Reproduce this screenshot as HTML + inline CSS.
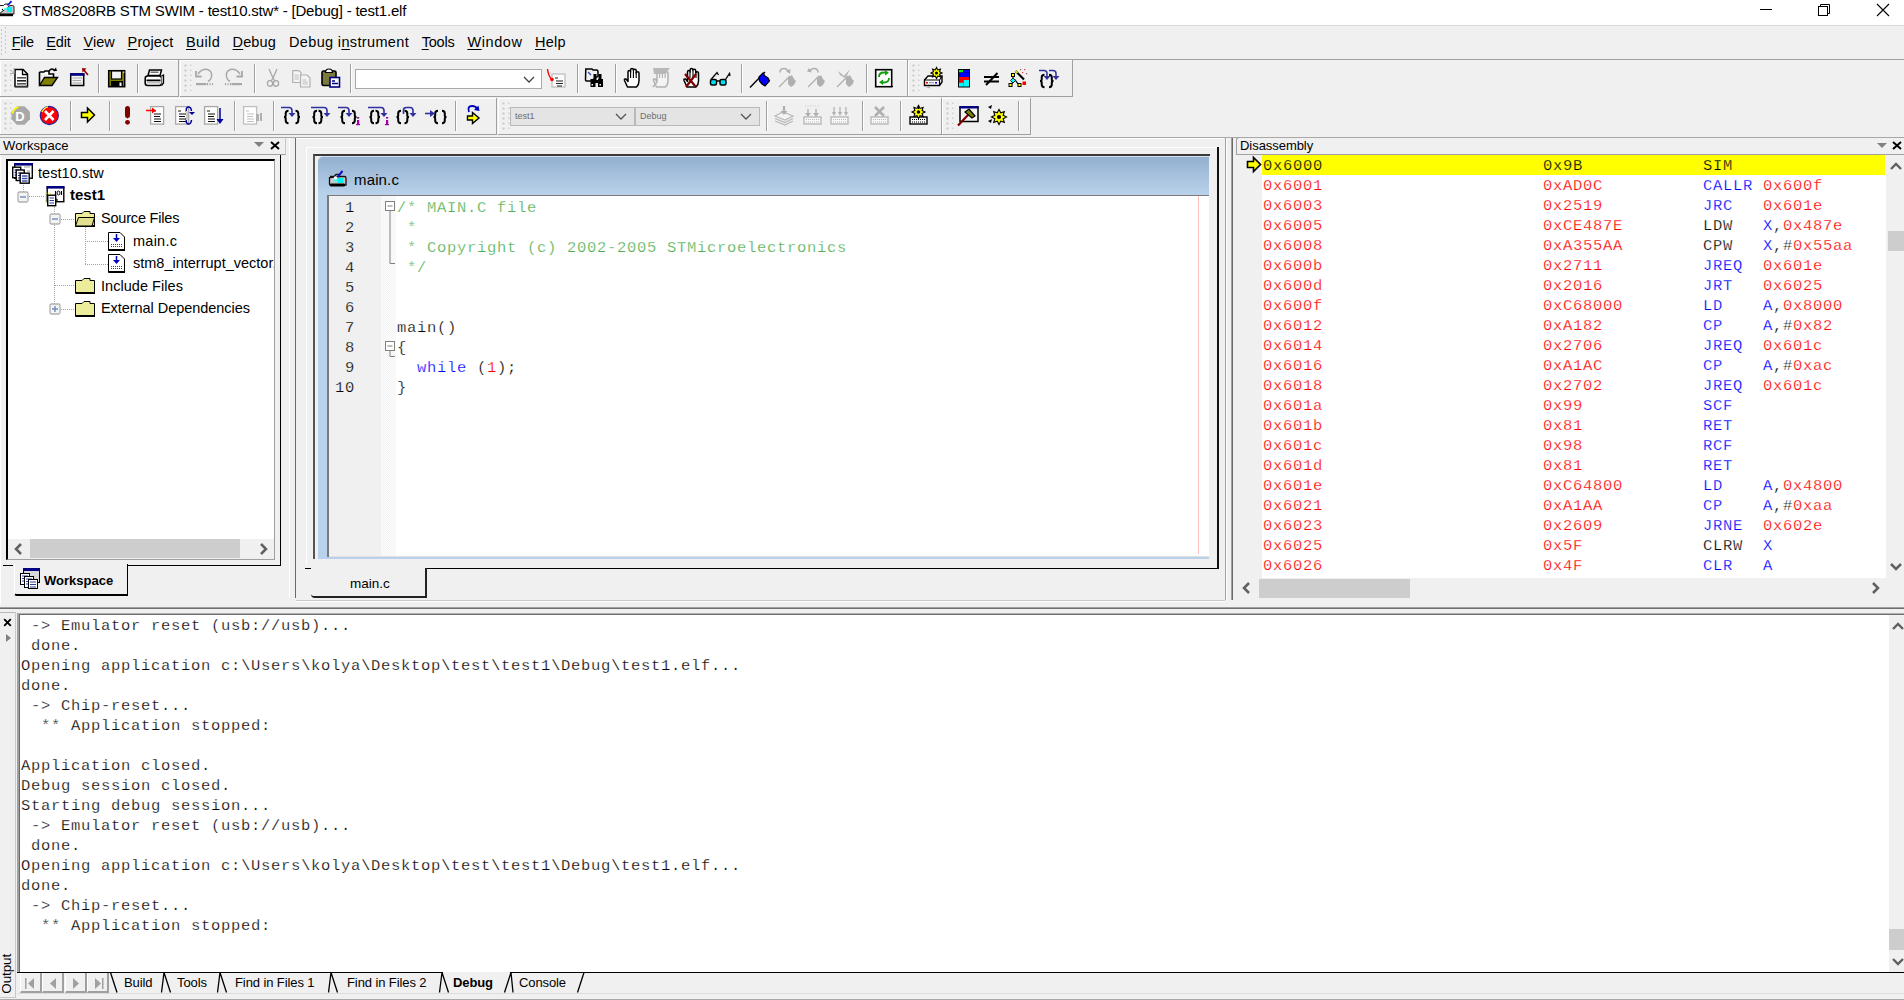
<!DOCTYPE html>
<html><head><meta charset="utf-8">
<style>
html,body{margin:0;padding:0;width:1904px;height:1000px;overflow:hidden;background:#f0f0f0;font-family:"Liberation Sans",sans-serif;}
.a{position:absolute;}
.t{position:absolute;white-space:pre;line-height:1;font-family:"Liberation Sans",sans-serif;color:#000;}
.m{font-family:"Liberation Mono",monospace;-webkit-text-stroke:0.25px #fff;}
u{text-decoration:underline;text-decoration-thickness:1px;text-underline-offset:1.5px;}
svg{position:absolute;overflow:visible;}
</style></head><body>
<div class="a" style="left:0px;top:0px;width:1904px;height:25px;background:#fff"></div>
<div class="a" style="left:0px;top:25px;width:1904px;height:1px;background:#dadada"></div>
<svg style="left:0px;top:0px" width="16" height="18" viewBox="0 0 16 18"><path d="M-1 5.5 H3.5 L5 4 H8 M10 5.5 H12.5 Q14 5.5 14 7 V14 H-1Z" fill="#c8c8c8" stroke="#222" stroke-width="1"/><rect x="-1" y="13.8" width="14" height="2.4" fill="#000"/><rect x="7" y="7" width="5" height="5" fill="#00f0f0"/><rect x="4" y="8" width="3" height="2" fill="#40f0f0"/><circle cx="5" cy="7" r="1.5" fill="#fff"/><path d="M7.5 5.5 L11.5 1.2" stroke="#1010c0" stroke-width="1.8"/><circle cx="2.5" cy="9.5" r="0.7" fill="#000"/></svg>
<div class="t" style="left:22px;top:3.30px;font-size:15px;letter-spacing:-0.2px">STM8S208RB STM SWIM - test10.stw* - [Debug] - test1.elf</div>
<div class="a" style="left:1760px;top:9px;width:12px;height:1px;background:#000"></div>
<svg style="left:1816px;top:3px" width="16" height="16" viewBox="0 0 16 16"><rect x="2.5" y="3.5" width="9" height="9" fill="none" stroke="#000"/><path d="M4.5 3.5 V1.5 H13.5 V10.5 H11.5" fill="none" stroke="#000"/></svg>
<svg style="left:1876px;top:3px" width="14" height="14" viewBox="0 0 14 14"><path d="M1 1 L13 13 M13 1 L1 13" stroke="#000" stroke-width="1.1"/></svg>
<div class="a" style="left:0px;top:26px;width:1904px;height:32px;background:#f0f0f0"></div>
<svg style="left:0px;top:28px" width="8" height="28" viewBox="0 0 8 28"><rect x="1" y="1" width="1" height="2" fill="#c8c8c8"/><rect x="5" y="-1" width="1" height="2" fill="#c8c8c8"/><rect x="1" y="5" width="1" height="2" fill="#c8c8c8"/><rect x="5" y="3" width="1" height="2" fill="#c8c8c8"/><rect x="1" y="9" width="1" height="2" fill="#c8c8c8"/><rect x="5" y="7" width="1" height="2" fill="#c8c8c8"/><rect x="1" y="13" width="1" height="2" fill="#c8c8c8"/><rect x="5" y="11" width="1" height="2" fill="#c8c8c8"/><rect x="1" y="17" width="1" height="2" fill="#c8c8c8"/><rect x="5" y="15" width="1" height="2" fill="#c8c8c8"/><rect x="1" y="21" width="1" height="2" fill="#c8c8c8"/><rect x="5" y="19" width="1" height="2" fill="#c8c8c8"/><rect x="1" y="25" width="1" height="2" fill="#c8c8c8"/><rect x="5" y="23" width="1" height="2" fill="#c8c8c8"/></svg>
<div class="t" style="left:11.7px;top:35.23px;font-size:14.5px;letter-spacing:-0.36px"><u>F</u>ile</div>
<div class="t" style="left:46.3px;top:35.23px;font-size:14.5px;letter-spacing:-0.13px"><u>E</u>dit</div>
<div class="t" style="left:83.5px;top:35.23px;font-size:14.5px;letter-spacing:0.04px"><u>V</u>iew</div>
<div class="t" style="left:127.6px;top:35.23px;font-size:14.5px;letter-spacing:0.1px"><u>P</u>roject</div>
<div class="t" style="left:186px;top:35.23px;font-size:14.5px;letter-spacing:0.36px"><u>B</u>uild</div>
<div class="t" style="left:232.6px;top:35.23px;font-size:14.5px;letter-spacing:0.11px"><u>D</u>ebug</div>
<div class="t" style="left:289px;top:35.23px;font-size:14.5px;letter-spacing:0.35px">Debug i<u>n</u>strument</div>
<div class="t" style="left:421.7px;top:35.23px;font-size:14.5px;letter-spacing:-0.19px"><u>T</u>ools</div>
<div class="t" style="left:467.4px;top:35.23px;font-size:14.5px;letter-spacing:0.6px"><u>W</u>indow</div>
<div class="t" style="left:535px;top:35.23px;font-size:14.5px;letter-spacing:0.28px"><u>H</u>elp</div>
<div class="a" style="left:0px;top:59px;width:1904px;height:1px;background:#a0a0a0"></div>
<div class="a" style="left:0px;top:60px;width:179px;height:1px;background:#ffffff"></div>
<div class="a" style="left:0px;top:60px;width:1px;height:37px;background:#ffffff"></div>
<div class="a" style="left:0px;top:96px;width:179px;height:1px;background:#a0a0a0"></div>
<div class="a" style="left:178px;top:60px;width:1px;height:37px;background:#a0a0a0"></div>
<svg style="left:4px;top:64px" width="10" height="31" viewBox="0 0 10 31"><rect x="0.5" y="0.5" width="2" height="2" fill="#c8c8c8"/><rect x="1.5" y="-1" width="1" height="1" fill="#fafafa"/><rect x="6" y="0.5" width="1.5" height="1.5" fill="#d0d0d0"/><rect x="7" y="-1" width="1" height="1" fill="#fafafa"/><rect x="0.5" y="5.5" width="2" height="2" fill="#c8c8c8"/><rect x="1.5" y="4" width="1" height="1" fill="#fafafa"/><rect x="6" y="5.5" width="1.5" height="1.5" fill="#d0d0d0"/><rect x="7" y="4" width="1" height="1" fill="#fafafa"/><rect x="0.5" y="10.5" width="2" height="2" fill="#c8c8c8"/><rect x="1.5" y="9" width="1" height="1" fill="#fafafa"/><rect x="6" y="10.5" width="1.5" height="1.5" fill="#d0d0d0"/><rect x="7" y="9" width="1" height="1" fill="#fafafa"/><rect x="0.5" y="15.5" width="2" height="2" fill="#c8c8c8"/><rect x="1.5" y="14" width="1" height="1" fill="#fafafa"/><rect x="6" y="15.5" width="1.5" height="1.5" fill="#d0d0d0"/><rect x="7" y="14" width="1" height="1" fill="#fafafa"/><rect x="0.5" y="20.5" width="2" height="2" fill="#c8c8c8"/><rect x="1.5" y="19" width="1" height="1" fill="#fafafa"/><rect x="6" y="20.5" width="1.5" height="1.5" fill="#d0d0d0"/><rect x="7" y="19" width="1" height="1" fill="#fafafa"/><rect x="0.5" y="25.5" width="2" height="2" fill="#c8c8c8"/><rect x="1.5" y="24" width="1" height="1" fill="#fafafa"/><rect x="6" y="25.5" width="1.5" height="1.5" fill="#d0d0d0"/><rect x="7" y="24" width="1" height="1" fill="#fafafa"/></svg>
<div class="a" style="left:180px;top:60px;width:728px;height:1px;background:#ffffff"></div>
<div class="a" style="left:180px;top:60px;width:1px;height:37px;background:#ffffff"></div>
<div class="a" style="left:180px;top:96px;width:728px;height:1px;background:#a0a0a0"></div>
<div class="a" style="left:907px;top:60px;width:1px;height:37px;background:#a0a0a0"></div>
<svg style="left:184px;top:64px" width="10" height="31" viewBox="0 0 10 31"><rect x="0.5" y="0.5" width="2" height="2" fill="#c8c8c8"/><rect x="1.5" y="-1" width="1" height="1" fill="#fafafa"/><rect x="6" y="0.5" width="1.5" height="1.5" fill="#d0d0d0"/><rect x="7" y="-1" width="1" height="1" fill="#fafafa"/><rect x="0.5" y="5.5" width="2" height="2" fill="#c8c8c8"/><rect x="1.5" y="4" width="1" height="1" fill="#fafafa"/><rect x="6" y="5.5" width="1.5" height="1.5" fill="#d0d0d0"/><rect x="7" y="4" width="1" height="1" fill="#fafafa"/><rect x="0.5" y="10.5" width="2" height="2" fill="#c8c8c8"/><rect x="1.5" y="9" width="1" height="1" fill="#fafafa"/><rect x="6" y="10.5" width="1.5" height="1.5" fill="#d0d0d0"/><rect x="7" y="9" width="1" height="1" fill="#fafafa"/><rect x="0.5" y="15.5" width="2" height="2" fill="#c8c8c8"/><rect x="1.5" y="14" width="1" height="1" fill="#fafafa"/><rect x="6" y="15.5" width="1.5" height="1.5" fill="#d0d0d0"/><rect x="7" y="14" width="1" height="1" fill="#fafafa"/><rect x="0.5" y="20.5" width="2" height="2" fill="#c8c8c8"/><rect x="1.5" y="19" width="1" height="1" fill="#fafafa"/><rect x="6" y="20.5" width="1.5" height="1.5" fill="#d0d0d0"/><rect x="7" y="19" width="1" height="1" fill="#fafafa"/><rect x="0.5" y="25.5" width="2" height="2" fill="#c8c8c8"/><rect x="1.5" y="24" width="1" height="1" fill="#fafafa"/><rect x="6" y="25.5" width="1.5" height="1.5" fill="#d0d0d0"/><rect x="7" y="24" width="1" height="1" fill="#fafafa"/></svg>
<div class="a" style="left:908px;top:60px;width:165px;height:1px;background:#ffffff"></div>
<div class="a" style="left:908px;top:60px;width:1px;height:37px;background:#ffffff"></div>
<div class="a" style="left:908px;top:96px;width:165px;height:1px;background:#a0a0a0"></div>
<div class="a" style="left:1072px;top:60px;width:1px;height:37px;background:#a0a0a0"></div>
<svg style="left:912px;top:64px" width="10" height="31" viewBox="0 0 10 31"><rect x="0.5" y="0.5" width="2" height="2" fill="#c8c8c8"/><rect x="1.5" y="-1" width="1" height="1" fill="#fafafa"/><rect x="6" y="0.5" width="1.5" height="1.5" fill="#d0d0d0"/><rect x="7" y="-1" width="1" height="1" fill="#fafafa"/><rect x="0.5" y="5.5" width="2" height="2" fill="#c8c8c8"/><rect x="1.5" y="4" width="1" height="1" fill="#fafafa"/><rect x="6" y="5.5" width="1.5" height="1.5" fill="#d0d0d0"/><rect x="7" y="4" width="1" height="1" fill="#fafafa"/><rect x="0.5" y="10.5" width="2" height="2" fill="#c8c8c8"/><rect x="1.5" y="9" width="1" height="1" fill="#fafafa"/><rect x="6" y="10.5" width="1.5" height="1.5" fill="#d0d0d0"/><rect x="7" y="9" width="1" height="1" fill="#fafafa"/><rect x="0.5" y="15.5" width="2" height="2" fill="#c8c8c8"/><rect x="1.5" y="14" width="1" height="1" fill="#fafafa"/><rect x="6" y="15.5" width="1.5" height="1.5" fill="#d0d0d0"/><rect x="7" y="14" width="1" height="1" fill="#fafafa"/><rect x="0.5" y="20.5" width="2" height="2" fill="#c8c8c8"/><rect x="1.5" y="19" width="1" height="1" fill="#fafafa"/><rect x="6" y="20.5" width="1.5" height="1.5" fill="#d0d0d0"/><rect x="7" y="19" width="1" height="1" fill="#fafafa"/><rect x="0.5" y="25.5" width="2" height="2" fill="#c8c8c8"/><rect x="1.5" y="24" width="1" height="1" fill="#fafafa"/><rect x="6" y="25.5" width="1.5" height="1.5" fill="#d0d0d0"/><rect x="7" y="24" width="1" height="1" fill="#fafafa"/></svg>
<div class="a" style="left:0px;top:98px;width:497px;height:1px;background:#ffffff"></div>
<div class="a" style="left:0px;top:98px;width:1px;height:37px;background:#ffffff"></div>
<div class="a" style="left:0px;top:134px;width:497px;height:1px;background:#a0a0a0"></div>
<div class="a" style="left:496px;top:98px;width:1px;height:37px;background:#a0a0a0"></div>
<svg style="left:4px;top:102px" width="10" height="31" viewBox="0 0 10 31"><rect x="0.5" y="0.5" width="2" height="2" fill="#c8c8c8"/><rect x="1.5" y="-1" width="1" height="1" fill="#fafafa"/><rect x="6" y="0.5" width="1.5" height="1.5" fill="#d0d0d0"/><rect x="7" y="-1" width="1" height="1" fill="#fafafa"/><rect x="0.5" y="5.5" width="2" height="2" fill="#c8c8c8"/><rect x="1.5" y="4" width="1" height="1" fill="#fafafa"/><rect x="6" y="5.5" width="1.5" height="1.5" fill="#d0d0d0"/><rect x="7" y="4" width="1" height="1" fill="#fafafa"/><rect x="0.5" y="10.5" width="2" height="2" fill="#c8c8c8"/><rect x="1.5" y="9" width="1" height="1" fill="#fafafa"/><rect x="6" y="10.5" width="1.5" height="1.5" fill="#d0d0d0"/><rect x="7" y="9" width="1" height="1" fill="#fafafa"/><rect x="0.5" y="15.5" width="2" height="2" fill="#c8c8c8"/><rect x="1.5" y="14" width="1" height="1" fill="#fafafa"/><rect x="6" y="15.5" width="1.5" height="1.5" fill="#d0d0d0"/><rect x="7" y="14" width="1" height="1" fill="#fafafa"/><rect x="0.5" y="20.5" width="2" height="2" fill="#c8c8c8"/><rect x="1.5" y="19" width="1" height="1" fill="#fafafa"/><rect x="6" y="20.5" width="1.5" height="1.5" fill="#d0d0d0"/><rect x="7" y="19" width="1" height="1" fill="#fafafa"/><rect x="0.5" y="25.5" width="2" height="2" fill="#c8c8c8"/><rect x="1.5" y="24" width="1" height="1" fill="#fafafa"/><rect x="6" y="25.5" width="1.5" height="1.5" fill="#d0d0d0"/><rect x="7" y="24" width="1" height="1" fill="#fafafa"/></svg>
<div class="a" style="left:498px;top:98px;width:444px;height:1px;background:#ffffff"></div>
<div class="a" style="left:498px;top:98px;width:1px;height:37px;background:#ffffff"></div>
<div class="a" style="left:498px;top:134px;width:444px;height:1px;background:#a0a0a0"></div>
<div class="a" style="left:941px;top:98px;width:1px;height:37px;background:#a0a0a0"></div>
<svg style="left:502px;top:102px" width="10" height="31" viewBox="0 0 10 31"><rect x="0.5" y="0.5" width="2" height="2" fill="#c8c8c8"/><rect x="1.5" y="-1" width="1" height="1" fill="#fafafa"/><rect x="6" y="0.5" width="1.5" height="1.5" fill="#d0d0d0"/><rect x="7" y="-1" width="1" height="1" fill="#fafafa"/><rect x="0.5" y="5.5" width="2" height="2" fill="#c8c8c8"/><rect x="1.5" y="4" width="1" height="1" fill="#fafafa"/><rect x="6" y="5.5" width="1.5" height="1.5" fill="#d0d0d0"/><rect x="7" y="4" width="1" height="1" fill="#fafafa"/><rect x="0.5" y="10.5" width="2" height="2" fill="#c8c8c8"/><rect x="1.5" y="9" width="1" height="1" fill="#fafafa"/><rect x="6" y="10.5" width="1.5" height="1.5" fill="#d0d0d0"/><rect x="7" y="9" width="1" height="1" fill="#fafafa"/><rect x="0.5" y="15.5" width="2" height="2" fill="#c8c8c8"/><rect x="1.5" y="14" width="1" height="1" fill="#fafafa"/><rect x="6" y="15.5" width="1.5" height="1.5" fill="#d0d0d0"/><rect x="7" y="14" width="1" height="1" fill="#fafafa"/><rect x="0.5" y="20.5" width="2" height="2" fill="#c8c8c8"/><rect x="1.5" y="19" width="1" height="1" fill="#fafafa"/><rect x="6" y="20.5" width="1.5" height="1.5" fill="#d0d0d0"/><rect x="7" y="19" width="1" height="1" fill="#fafafa"/><rect x="0.5" y="25.5" width="2" height="2" fill="#c8c8c8"/><rect x="1.5" y="24" width="1" height="1" fill="#fafafa"/><rect x="6" y="25.5" width="1.5" height="1.5" fill="#d0d0d0"/><rect x="7" y="24" width="1" height="1" fill="#fafafa"/></svg>
<div class="a" style="left:942px;top:98px;width:89px;height:1px;background:#ffffff"></div>
<div class="a" style="left:942px;top:98px;width:1px;height:37px;background:#ffffff"></div>
<div class="a" style="left:942px;top:134px;width:89px;height:1px;background:#a0a0a0"></div>
<div class="a" style="left:1030px;top:98px;width:1px;height:37px;background:#a0a0a0"></div>
<svg style="left:946px;top:102px" width="10" height="31" viewBox="0 0 10 31"><rect x="0.5" y="0.5" width="2" height="2" fill="#c8c8c8"/><rect x="1.5" y="-1" width="1" height="1" fill="#fafafa"/><rect x="6" y="0.5" width="1.5" height="1.5" fill="#d0d0d0"/><rect x="7" y="-1" width="1" height="1" fill="#fafafa"/><rect x="0.5" y="5.5" width="2" height="2" fill="#c8c8c8"/><rect x="1.5" y="4" width="1" height="1" fill="#fafafa"/><rect x="6" y="5.5" width="1.5" height="1.5" fill="#d0d0d0"/><rect x="7" y="4" width="1" height="1" fill="#fafafa"/><rect x="0.5" y="10.5" width="2" height="2" fill="#c8c8c8"/><rect x="1.5" y="9" width="1" height="1" fill="#fafafa"/><rect x="6" y="10.5" width="1.5" height="1.5" fill="#d0d0d0"/><rect x="7" y="9" width="1" height="1" fill="#fafafa"/><rect x="0.5" y="15.5" width="2" height="2" fill="#c8c8c8"/><rect x="1.5" y="14" width="1" height="1" fill="#fafafa"/><rect x="6" y="15.5" width="1.5" height="1.5" fill="#d0d0d0"/><rect x="7" y="14" width="1" height="1" fill="#fafafa"/><rect x="0.5" y="20.5" width="2" height="2" fill="#c8c8c8"/><rect x="1.5" y="19" width="1" height="1" fill="#fafafa"/><rect x="6" y="20.5" width="1.5" height="1.5" fill="#d0d0d0"/><rect x="7" y="19" width="1" height="1" fill="#fafafa"/><rect x="0.5" y="25.5" width="2" height="2" fill="#c8c8c8"/><rect x="1.5" y="24" width="1" height="1" fill="#fafafa"/><rect x="6" y="25.5" width="1.5" height="1.5" fill="#d0d0d0"/><rect x="7" y="24" width="1" height="1" fill="#fafafa"/></svg>
<div class="a" style="left:98px;top:64px;width:1px;height:29px;background:#a0a0a0"></div>
<div class="a" style="left:99px;top:64px;width:1px;height:29px;background:#ffffff"></div>
<div class="a" style="left:137px;top:64px;width:1px;height:29px;background:#a0a0a0"></div>
<div class="a" style="left:138px;top:64px;width:1px;height:29px;background:#ffffff"></div>
<div class="a" style="left:254px;top:64px;width:1px;height:29px;background:#a0a0a0"></div>
<div class="a" style="left:255px;top:64px;width:1px;height:29px;background:#ffffff"></div>
<div class="a" style="left:350px;top:64px;width:1px;height:29px;background:#a0a0a0"></div>
<div class="a" style="left:351px;top:64px;width:1px;height:29px;background:#ffffff"></div>
<div class="a" style="left:577px;top:64px;width:1px;height:29px;background:#a0a0a0"></div>
<div class="a" style="left:578px;top:64px;width:1px;height:29px;background:#ffffff"></div>
<div class="a" style="left:615px;top:64px;width:1px;height:29px;background:#a0a0a0"></div>
<div class="a" style="left:616px;top:64px;width:1px;height:29px;background:#ffffff"></div>
<div class="a" style="left:741px;top:64px;width:1px;height:29px;background:#a0a0a0"></div>
<div class="a" style="left:742px;top:64px;width:1px;height:29px;background:#ffffff"></div>
<div class="a" style="left:866px;top:64px;width:1px;height:29px;background:#a0a0a0"></div>
<div class="a" style="left:867px;top:64px;width:1px;height:29px;background:#ffffff"></div>
<div class="a" style="left:70px;top:101px;width:1px;height:30px;background:#a0a0a0"></div>
<div class="a" style="left:71px;top:101px;width:1px;height:30px;background:#ffffff"></div>
<div class="a" style="left:109px;top:101px;width:1px;height:30px;background:#a0a0a0"></div>
<div class="a" style="left:110px;top:101px;width:1px;height:30px;background:#ffffff"></div>
<div class="a" style="left:234px;top:101px;width:1px;height:30px;background:#a0a0a0"></div>
<div class="a" style="left:235px;top:101px;width:1px;height:30px;background:#ffffff"></div>
<div class="a" style="left:273px;top:101px;width:1px;height:30px;background:#a0a0a0"></div>
<div class="a" style="left:274px;top:101px;width:1px;height:30px;background:#ffffff"></div>
<div class="a" style="left:455px;top:101px;width:1px;height:30px;background:#a0a0a0"></div>
<div class="a" style="left:456px;top:101px;width:1px;height:30px;background:#ffffff"></div>
<div class="a" style="left:766px;top:101px;width:1px;height:30px;background:#a0a0a0"></div>
<div class="a" style="left:767px;top:101px;width:1px;height:30px;background:#ffffff"></div>
<div class="a" style="left:862px;top:101px;width:1px;height:30px;background:#a0a0a0"></div>
<div class="a" style="left:863px;top:101px;width:1px;height:30px;background:#ffffff"></div>
<div class="a" style="left:900px;top:101px;width:1px;height:30px;background:#a0a0a0"></div>
<div class="a" style="left:901px;top:101px;width:1px;height:30px;background:#ffffff"></div>
<div class="a" style="left:1018px;top:101px;width:1px;height:30px;background:#a0a0a0"></div>
<div class="a" style="left:1019px;top:101px;width:1px;height:30px;background:#ffffff"></div>
<div class="a" style="left:355px;top:69px;width:187px;height:20px;background:#fff;border:1px solid #a9a9a9;box-sizing:border-box"></div>
<svg style="left:522px;top:74px" width="14" height="10" viewBox="0 0 14 10"><path d="M2 3 L7 8 L12 3" fill="none" stroke="#444" stroke-width="1.3"/></svg>
<div class="a" style="left:510px;top:107px;width:125px;height:19px;background:#e4e4e4;border:1px solid #b9b9b9;box-sizing:border-box"></div>
<div class="a" style="left:635px;top:107px;width:125px;height:19px;background:#e4e4e4;border:1px solid #b9b9b9;box-sizing:border-box"></div>
<div class="t" style="left:515px;top:112.38px;font-size:9px;color:#6d6d6d">test1</div>
<div class="t" style="left:640px;top:112.38px;font-size:9px;color:#6d6d6d">Debug</div>
<svg style="left:614px;top:111px" width="14" height="10" viewBox="0 0 14 10"><path d="M2 3 L7 8 L12 3" fill="none" stroke="#555" stroke-width="1.3"/></svg>
<svg style="left:739px;top:111px" width="14" height="10" viewBox="0 0 14 10"><path d="M2 3 L7 8 L12 3" fill="none" stroke="#555" stroke-width="1.3"/></svg>
<div class="a" style="left:0px;top:137px;width:286px;height:18px;background:#f0f0f0;border-top:1px solid #fff;border-right:1px solid #c8c8c8;border-bottom:1px solid #a0a0a0;box-sizing:border-box"></div>
<div class="t" style="left:3px;top:139.00px;font-size:13px;letter-spacing:0.1px">Workspace</div>
<svg style="left:254px;top:142px" width="10" height="6" viewBox="0 0 10 6"><path d="M0 0 L10 0 L5 5Z" fill="#808080"/></svg>
<svg style="left:270px;top:141px" width="10" height="9" viewBox="0 0 10 9"><path d="M1 1 L9 8 M9 1 L1 8" stroke="#000" stroke-width="2"/></svg>
<div class="a" style="left:280px;top:155px;width:1px;height:411px;background:#000"></div>
<div class="a" style="left:128px;top:565px;width:153px;height:1px;background:#000"></div>
<div class="a" style="left:0px;top:155px;width:1px;height:450px;background:#ffffff"></div>
<div class="a" style="left:6px;top:159px;width:269px;height:401px;background:#fff;border-left:2px solid #000;border-top:2px solid #000;border-right:1px solid #a0a0a0;border-bottom:1px solid #a0a0a0;box-sizing:border-box"></div>
<div class="a" style="left:8px;top:539px;width:266px;height:20px;background:#f0f0f0"></div>
<div class="a" style="left:30px;top:539px;width:210px;height:19px;background:#cdcdcd"></div>
<svg style="left:14px;top:543px" width="10" height="12" viewBox="0 0 10 12"><path d="M7 1 L2 6 L7 11" fill="none" stroke="#606060" stroke-width="2.5"/></svg>
<svg style="left:258px;top:543px" width="10" height="12" viewBox="0 0 10 12"><path d="M3 1 L8 6 L3 11" fill="none" stroke="#606060" stroke-width="2.5"/></svg>
<div class="a" style="left:3px;top:565px;width:10px;height:1px;background:#000"></div>
<div class="a" style="left:14px;top:564px;width:114px;height:32px;background:#f0f0f0;border-right:1px solid #000;border-bottom:2px solid #000;border-left:1px solid #fff;border-bottom-left-radius:3px;box-sizing:border-box"></div>
<div class="t" style="left:44px;top:574.00px;font-size:13px;font-weight:bold;letter-spacing:0px">Workspace</div>
<svg style="left:23px;top:183px" width="1" height="13" viewBox="0 0 1 13"><line x1="0.5" y1="0" x2="0.5" y2="13" stroke="#a0a0a0" stroke-dasharray="1 1"/></svg>
<svg style="left:29px;top:196px" width="15" height="1" viewBox="0 0 15 1"><line x1="0" y1="0.5" x2="15" y2="0.5" stroke="#a0a0a0" stroke-dasharray="1 1"/></svg>
<svg style="left:54px;top:205px" width="1" height="104" viewBox="0 0 1 104"><line x1="0.5" y1="0" x2="0.5" y2="104" stroke="#a0a0a0" stroke-dasharray="1 1"/></svg>
<svg style="left:61px;top:219px" width="14" height="1" viewBox="0 0 14 1"><line x1="0" y1="0.5" x2="14" y2="0.5" stroke="#a0a0a0" stroke-dasharray="1 1"/></svg>
<svg style="left:55px;top:285px" width="20" height="1" viewBox="0 0 20 1"><line x1="0" y1="0.5" x2="20" y2="0.5" stroke="#a0a0a0" stroke-dasharray="1 1"/></svg>
<svg style="left:61px;top:309px" width="14" height="1" viewBox="0 0 14 1"><line x1="0" y1="0.5" x2="14" y2="0.5" stroke="#a0a0a0" stroke-dasharray="1 1"/></svg>
<svg style="left:85px;top:227px" width="1" height="37" viewBox="0 0 1 37"><line x1="0.5" y1="0" x2="0.5" y2="37" stroke="#a0a0a0" stroke-dasharray="1 1"/></svg>
<svg style="left:85px;top:241px" width="23" height="1" viewBox="0 0 23 1"><line x1="0" y1="0.5" x2="23" y2="0.5" stroke="#a0a0a0" stroke-dasharray="1 1"/></svg>
<svg style="left:85px;top:264px" width="23" height="1" viewBox="0 0 23 1"><line x1="0" y1="0.5" x2="23" y2="0.5" stroke="#a0a0a0" stroke-dasharray="1 1"/></svg>
<svg style="left:17px;top:191px" width="12" height="12" viewBox="0 0 12 12"><rect x="1" y="1" width="10" height="10" rx="1.5" fill="#f4f4f4" stroke="#b0b0b0" stroke-width="1.3"/><path d="M3 6 H9" stroke="#7088c0" stroke-width="1.4"/></svg>
<svg style="left:49px;top:213px" width="12" height="12" viewBox="0 0 12 12"><rect x="1" y="1" width="10" height="10" rx="1.5" fill="#f4f4f4" stroke="#b0b0b0" stroke-width="1.3"/><path d="M3 6 H9" stroke="#7088c0" stroke-width="1.4"/></svg>
<svg style="left:49px;top:303px" width="12" height="12" viewBox="0 0 12 12"><rect x="1" y="1" width="10" height="10" rx="1.5" fill="#f4f4f4" stroke="#b0b0b0" stroke-width="1.3"/><path d="M3 6 H9" stroke="#7088c0" stroke-width="1.4"/><path d="M6 3 V9" stroke="#7088c0" stroke-width="1.4"/></svg>
<svg style="left:12px;top:163px" width="21" height="20" viewBox="0 0 21 20"><rect x="2.7" y="1.2" width="17.6" height="14" fill="#fff" stroke="#000" stroke-width="1.4"/><rect x="2" y="0" width="19" height="2.6" fill="#000080"/><path d="M12 4 H18 M15 8 H18" stroke="#999" stroke-width="1"/><rect x="0.7" y="4.2" width="8" height="10.5" fill="#fff" stroke="#000" stroke-width="1.4"/><path d="M2.5 7 H7 M2.5 9.5 H7 M2.5 12 H7" stroke="#2020a0" stroke-width="1.1"/><rect x="4.2" y="7" width="8" height="10.5" fill="#fff" stroke="#000" stroke-width="1.4"/><path d="M6 10 H10.5 M6 12.5 H10.5 M6 15 H10.5" stroke="#2020a0" stroke-width="1.1"/><rect x="8.2" y="10.2" width="9" height="10" fill="#fff" stroke="#000" stroke-width="1.4"/><path d="M10 13 H15.5 M10 15.5 H15.5 M10 18 H15.5" stroke="#4050b0" stroke-width="1.3"/></svg>
<div class="t" style="left:38px;top:165.73px;font-size:14.5px;letter-spacing:0.05px">test10.stw</div>
<svg style="left:45px;top:186px" width="20" height="21" viewBox="0 0 20 21"><rect x="2.2" y="1.2" width="16.6" height="14.5" fill="#fff" stroke="#000" stroke-width="1.4"/><rect x="1.5" y="0" width="18" height="2.6" fill="#000080"/><path d="M10.5 5 V9 M16.5 5 V9 M12 13 V16" stroke="#000" stroke-width="1.1"/><ellipse cx="13.5" cy="7" rx="1.5" ry="2" fill="none" stroke="#000" stroke-width="1"/><ellipse cx="9.5" cy="13.5" rx="1.5" ry="2" fill="none" stroke="#000" stroke-width="1"/><rect x="0.6" y="7.2" width="5" height="9" fill="none" stroke="#e8e800" stroke-width="1" stroke-dasharray="1 1"/><rect x="2.7" y="9.2" width="8" height="10.5" fill="#fff" stroke="#000" stroke-width="1.4"/><path d="M4.5 12 H9 M4.5 14.5 H9 M4.5 17 H9" stroke="#3040b0" stroke-width="1.2"/></svg>
<div class="t" style="left:70px;top:187.30px;font-size:15px;font-weight:bold;letter-spacing:0px">test1</div>
<svg style="left:75px;top:210px" width="20" height="18" viewBox="0 0 20 18"><path d="M0.5 3.5 H7 L9 1.5 H15 V3.5 H19.5 V16.5 H0.5Z" fill="#ecec9a" stroke="#000"/><rect x="1" y="15" width="19" height="2" fill="#000"/><path d="M3.5 7.5 H19.5 L17 16 H0.5Z" fill="#e0e090" stroke="#000"/></svg>
<div class="t" style="left:101px;top:210.73px;font-size:14.5px;letter-spacing:-0.2px">Source Files</div>
<svg style="left:108px;top:232px" width="18" height="19" viewBox="0 0 18 19"><path d="M0.5 0.5 H12 L16.5 5 V18.5 H0.5Z" fill="#fff" stroke="#000"/><rect x="1" y="17" width="16" height="2" fill="#000"/><path d="M8.5 2 V8" stroke="#0000c0" stroke-width="1.5"/><path d="M5 6 L8.5 10 L12 6Z" fill="#0000c0"/><path d="M3 12.5H14M3 14.5H14" stroke="#444" stroke-dasharray="1 1"/></svg>
<div class="t" style="left:133px;top:233.73px;font-size:14.5px;letter-spacing:0.25px">main.c</div>
<svg style="left:108px;top:254px" width="18" height="19" viewBox="0 0 18 19"><path d="M0.5 0.5 H12 L16.5 5 V18.5 H0.5Z" fill="#fff" stroke="#000"/><rect x="1" y="17" width="16" height="2" fill="#000"/><path d="M8.5 2 V8" stroke="#0000c0" stroke-width="1.5"/><path d="M5 6 L8.5 10 L12 6Z" fill="#0000c0"/><path d="M3 12.5H14M3 14.5H14" stroke="#444" stroke-dasharray="1 1"/></svg>
<div class="a" style="left:130px;top:250px;width:144px;height:24px;overflow:hidden">
<div class="t" style="left:3px;top:5.73px;font-size:14.5px;letter-spacing:0px">stm8_interrupt_vector.c</div>
</div>
<svg style="left:75px;top:277px" width="20" height="18" viewBox="0 0 20 18"><path d="M0.5 3.5 H7 L9 1.5 H15 V3.5 H19.5 V16.5 H0.5Z" fill="#ecec9a" stroke="#000"/><rect x="1" y="15" width="19" height="2" fill="#000"/></svg>
<div class="t" style="left:101px;top:278.73px;font-size:14.5px;letter-spacing:0.04px">Include Files</div>
<svg style="left:75px;top:300px" width="20" height="18" viewBox="0 0 20 18"><path d="M0.5 3.5 H7 L9 1.5 H15 V3.5 H19.5 V16.5 H0.5Z" fill="#ecec9a" stroke="#000"/><rect x="1" y="15" width="19" height="2" fill="#000"/></svg>
<div class="t" style="left:101px;top:300.73px;font-size:14.5px;letter-spacing:-0.05px">External Dependencies</div>
<div class="a" style="left:289px;top:137px;width:1px;height:460px;background:#ffffff"></div>
<div class="a" style="left:295px;top:137px;width:1px;height:461px;background:#696969"></div>
<div class="a" style="left:296px;top:600px;width:929px;height:1px;background:#c8c8c8"></div>
<div class="a" style="left:296px;top:601px;width:929px;height:1px;background:#ffffff"></div>
<div class="a" style="left:1225px;top:137px;width:1px;height:463px;background:#a0a0a0"></div>
<div class="a" style="left:1226px;top:137px;width:1px;height:463px;background:#ffffff"></div>
<div class="a" style="left:1232px;top:137px;width:1px;height:463px;background:#696969"></div>
<div class="a" style="left:1231px;top:137px;width:1px;height:463px;background:#a0a0a0"></div>
<div class="a" style="left:0px;top:607px;width:1904px;height:1px;background:#a0a0a0"></div>
<div class="a" style="left:0px;top:608px;width:1904px;height:1px;background:#6e6e6e"></div>
<div class="a" style="left:296px;top:137px;width:929px;height:463px;background:#f0f0f0"></div>
<div class="a" style="left:296px;top:138px;width:928px;height:1px;background:#ffffff"></div>
<div class="a" style="left:306px;top:147px;width:915px;height:418px;border-left:1px solid #fff;border-top:1px solid #fff;box-sizing:border-box"></div>
<div class="a" style="left:313px;top:154px;width:897px;height:415px;background:#f0f0f0;border-left:2px solid #555;border-top:2px solid #3a3a3a;box-sizing:border-box"></div>
<div class="a" style="left:1217px;top:147px;width:2px;height:422px;background:#111"></div>
<div class="a" style="left:318px;top:156px;width:891px;height:403px;background:#b9d1ea;border-top-left-radius:6px"></div>
<div class="a" style="left:322px;top:156px;width:887px;height:1px;background:#d4e0ee"></div>
<div class="a" style="left:318px;top:157px;width:891px;height:38px;background:linear-gradient(#93b0d0,#bad2eb);border-top-left-radius:5px"></div>
<div class="a" style="left:327px;top:195px;width:882px;height:1px;background:#7a7a7a"></div>
<svg style="left:329px;top:169px" width="20" height="18" viewBox="0 0 20 18"><path d="M1 7.5 H5 L7 5.5 H10 M12 7.5 H15.5 Q17 7.5 17 9 V16 H1 Q0.5 16 0.5 15 V8.5Z" fill="#c8c8c8" stroke="#111" stroke-width="1.3"/><rect x="1" y="14.5" width="15" height="3" rx="1" fill="#000"/><rect x="8.5" y="9" width="6" height="5" fill="#00f0f0"/><rect x="5" y="10" width="3" height="2.5" fill="#40f0f0"/><circle cx="6.5" cy="9" r="1.8" fill="#fff"/><path d="M9 7.5 L13.5 2" stroke="#1010c0" stroke-width="2"/></svg>
<div class="t" style="left:354px;top:172.30px;font-size:15px;letter-spacing:0.15px">main.c</div>
<div class="a" style="left:327px;top:196px;width:882px;height:362px;background:#fff;border-left:2px solid #7a7a7a;box-sizing:border-box"></div>
<div class="a" style="left:329px;top:196px;width:52px;height:360px;background:#f0f0f0"></div>
<div class="a" style="left:381px;top:196px;width:15px;height:360px;background-image:repeating-conic-gradient(#f4f4f4 0 25%,#fcfcfc 0 50%);background-size:2px 2px"></div>
<div class="a" style="left:329px;top:556px;width:880px;height:1px;background:#e0e0e0"></div>
<div class="a" style="left:327px;top:557px;width:882px;height:2px;background:#b9d1ea"></div>
<div class="a" style="left:1198px;top:196px;width:1px;height:358px;background:#ffc0c0"></div>
<div class="t m" style="left:345px;top:201.12px;font-size:15.5px;letter-spacing:0.70px;color:#000;-webkit-text-stroke-color:#f0f0f0">1</div>
<div class="t m" style="left:345px;top:221.12px;font-size:15.5px;letter-spacing:0.70px;color:#000;-webkit-text-stroke-color:#f0f0f0">2</div>
<div class="t m" style="left:345px;top:241.12px;font-size:15.5px;letter-spacing:0.70px;color:#000;-webkit-text-stroke-color:#f0f0f0">3</div>
<div class="t m" style="left:345px;top:261.12px;font-size:15.5px;letter-spacing:0.70px;color:#000;-webkit-text-stroke-color:#f0f0f0">4</div>
<div class="t m" style="left:345px;top:281.12px;font-size:15.5px;letter-spacing:0.70px;color:#000;-webkit-text-stroke-color:#f0f0f0">5</div>
<div class="t m" style="left:345px;top:301.12px;font-size:15.5px;letter-spacing:0.70px;color:#000;-webkit-text-stroke-color:#f0f0f0">6</div>
<div class="t m" style="left:345px;top:321.12px;font-size:15.5px;letter-spacing:0.70px;color:#000;-webkit-text-stroke-color:#f0f0f0">7</div>
<div class="t m" style="left:345px;top:341.12px;font-size:15.5px;letter-spacing:0.70px;color:#000;-webkit-text-stroke-color:#f0f0f0">8</div>
<div class="t m" style="left:345px;top:361.12px;font-size:15.5px;letter-spacing:0.70px;color:#000;-webkit-text-stroke-color:#f0f0f0">9</div>
<div class="t m" style="left:335px;top:381.12px;font-size:15.5px;letter-spacing:0.70px;color:#000;-webkit-text-stroke-color:#f0f0f0">10</div>
<svg style="left:384px;top:200px" width="12" height="70" viewBox="0 0 12 70"><rect x="1.5" y="1.5" width="9" height="9" fill="#fff" stroke="#808080"/><path d="M3.5 6 H8.5" stroke="#808080"/><path d="M6 11 V63.5 H11" fill="none" stroke="#808080"/></svg>
<svg style="left:384px;top:340px" width="12" height="20" viewBox="0 0 12 20"><rect x="1.5" y="1.5" width="9" height="9" fill="#fff" stroke="#808080"/><path d="M3.5 6 H8.5" stroke="#808080"/><path d="M6 11 V16.5 H11" fill="none" stroke="#808080"/></svg>
<div class="t m" style="left:397px;top:201.12px;font-size:15.5px;letter-spacing:0.70px;color:#000;"><span style="color:#4fae4f">/* MAIN.C file</span></div>
<div class="t m" style="left:397px;top:221.12px;font-size:15.5px;letter-spacing:0.70px;color:#000;"><span style="color:#4fae4f"> *</span></div>
<div class="t m" style="left:397px;top:241.12px;font-size:15.5px;letter-spacing:0.70px;color:#000;"><span style="color:#4fae4f"> * Copyright (c) 2002-2005 STMicroelectronics</span></div>
<div class="t m" style="left:397px;top:261.12px;font-size:15.5px;letter-spacing:0.70px;color:#000;"><span style="color:#4fae4f"> */</span></div>
<div class="t m" style="left:397px;top:321.12px;font-size:15.5px;letter-spacing:0.70px;color:#000;"><span style="color:#000">main()</span></div>
<div class="t m" style="left:397px;top:341.12px;font-size:15.5px;letter-spacing:0.70px;color:#000;"><span style="color:#000">{</span></div>
<div class="t m" style="left:397px;top:361.12px;font-size:15.5px;letter-spacing:0.70px;color:#000;"><span style="color:#000">  </span><span style="color:#0000ff">while</span><span style="color:#000"> (</span><span style="color:#ff0000">1</span><span style="color:#000">);</span></div>
<div class="t m" style="left:397px;top:381.12px;font-size:15.5px;letter-spacing:0.70px;color:#000;"><span style="color:#000">}</span></div>
<div class="a" style="left:311px;top:559px;width:1px;height:1px;background:#000"></div>
<div class="a" style="left:305px;top:568px;width:6px;height:1px;background:#000"></div>
<div class="a" style="left:426px;top:568px;width:792px;height:1px;background:#000"></div>
<div class="a" style="left:311px;top:559px;width:116px;height:39px;background:#f0f0f0;border-bottom:2px solid #222;border-bottom-left-radius:4px;box-sizing:border-box"></div>
<div class="a" style="left:425px;top:568px;width:2px;height:30px;background:#222"></div>
<div class="t" style="left:350px;top:576.57px;font-size:13.5px;letter-spacing:0px;color:#000">main.c</div>
<div class="a" style="left:1233px;top:137px;width:671px;height:470px;background:#f0f0f0"></div>
<div class="a" style="left:1236px;top:137px;width:668px;height:18px;background:#f0f0f0;border-top:1px solid #a0a0a0;border-left:1px solid #a0a0a0;border-bottom:1px solid #a0a0a0;border-top-left-radius:3px;box-sizing:border-box"></div>
<div class="t" style="left:1240px;top:139.00px;font-size:13px;letter-spacing:-0.05px">Disassembly</div>
<svg style="left:1877px;top:143px" width="10" height="6" viewBox="0 0 10 6"><path d="M0 0 L10 0 L5 5Z" fill="#808080"/></svg>
<svg style="left:1892px;top:141px" width="10" height="9" viewBox="0 0 10 9"><path d="M1 1 L9 8 M9 1 L1 8" stroke="#000" stroke-width="2"/></svg>
<div class="a" style="left:1237px;top:155px;width:649px;height:423px;background:#fff"></div>
<div class="a" style="left:1237px;top:155px;width:25px;height:423px;background:#f0f0f0"></div>
<div class="a" style="left:1262px;top:155px;width:623px;height:20px;background:#ffff00"></div>
<svg style="left:1246px;top:156px" width="16" height="17" viewBox="0 0 16 17"><path d="M1.5 5.5 H7.5 V1.5 L14.5 8.5 L7.5 15.5 V11.5 H1.5Z" fill="#ffff00" stroke="#000" stroke-width="1.6" stroke-linejoin="miter"/></svg>
<div class="t m" style="left:1263px;top:159.12px;font-size:15.5px;letter-spacing:0.70px;color:#000;-webkit-text-stroke-color:#ff0">0x6000</div>
<div class="t m" style="left:1543px;top:159.12px;font-size:15.5px;letter-spacing:0.70px;color:#000;-webkit-text-stroke-color:#ff0">0x9B</div>
<div class="t m" style="left:1703px;top:159.12px;font-size:15.5px;letter-spacing:0.70px;color:#000;-webkit-text-stroke-color:#ff0">SIM</div>
<div class="t m" style="left:1263px;top:179.12px;font-size:15.5px;letter-spacing:0.70px;color:#ff0000;">0x6001</div>
<div class="t m" style="left:1543px;top:179.12px;font-size:15.5px;letter-spacing:0.70px;color:#ff0000;">0xAD0C</div>
<div class="t m" style="left:1703px;top:179.12px;font-size:15.5px;letter-spacing:0.70px;color:#0000ff;">CALLR</div>
<div class="t m" style="left:1763px;top:179.12px;font-size:15.5px;letter-spacing:0.70px;color:#000;"><span style="color:#ff0000">0x600f</span></div>
<div class="t m" style="left:1263px;top:199.12px;font-size:15.5px;letter-spacing:0.70px;color:#ff0000;">0x6003</div>
<div class="t m" style="left:1543px;top:199.12px;font-size:15.5px;letter-spacing:0.70px;color:#ff0000;">0x2519</div>
<div class="t m" style="left:1703px;top:199.12px;font-size:15.5px;letter-spacing:0.70px;color:#0000ff;">JRC</div>
<div class="t m" style="left:1763px;top:199.12px;font-size:15.5px;letter-spacing:0.70px;color:#000;"><span style="color:#ff0000">0x601e</span></div>
<div class="t m" style="left:1263px;top:219.12px;font-size:15.5px;letter-spacing:0.70px;color:#ff0000;">0x6005</div>
<div class="t m" style="left:1543px;top:219.12px;font-size:15.5px;letter-spacing:0.70px;color:#ff0000;">0xCE487E</div>
<div class="t m" style="left:1703px;top:219.12px;font-size:15.5px;letter-spacing:0.70px;color:#000;">LDW</div>
<div class="t m" style="left:1763px;top:219.12px;font-size:15.5px;letter-spacing:0.70px;color:#000;"><span style="color:#0000ff">X</span><span style="color:#000">,</span><span style="color:#ff0000">0x487e</span></div>
<div class="t m" style="left:1263px;top:239.12px;font-size:15.5px;letter-spacing:0.70px;color:#ff0000;">0x6008</div>
<div class="t m" style="left:1543px;top:239.12px;font-size:15.5px;letter-spacing:0.70px;color:#ff0000;">0xA355AA</div>
<div class="t m" style="left:1703px;top:239.12px;font-size:15.5px;letter-spacing:0.70px;color:#000;">CPW</div>
<div class="t m" style="left:1763px;top:239.12px;font-size:15.5px;letter-spacing:0.70px;color:#000;"><span style="color:#0000ff">X</span><span style="color:#000">,</span><span style="color:#000">#</span><span style="color:#ff0000">0x55aa</span></div>
<div class="t m" style="left:1263px;top:259.12px;font-size:15.5px;letter-spacing:0.70px;color:#ff0000;">0x600b</div>
<div class="t m" style="left:1543px;top:259.12px;font-size:15.5px;letter-spacing:0.70px;color:#ff0000;">0x2711</div>
<div class="t m" style="left:1703px;top:259.12px;font-size:15.5px;letter-spacing:0.70px;color:#0000ff;">JREQ</div>
<div class="t m" style="left:1763px;top:259.12px;font-size:15.5px;letter-spacing:0.70px;color:#000;"><span style="color:#ff0000">0x601e</span></div>
<div class="t m" style="left:1263px;top:279.12px;font-size:15.5px;letter-spacing:0.70px;color:#ff0000;">0x600d</div>
<div class="t m" style="left:1543px;top:279.12px;font-size:15.5px;letter-spacing:0.70px;color:#ff0000;">0x2016</div>
<div class="t m" style="left:1703px;top:279.12px;font-size:15.5px;letter-spacing:0.70px;color:#0000ff;">JRT</div>
<div class="t m" style="left:1763px;top:279.12px;font-size:15.5px;letter-spacing:0.70px;color:#000;"><span style="color:#ff0000">0x6025</span></div>
<div class="t m" style="left:1263px;top:299.12px;font-size:15.5px;letter-spacing:0.70px;color:#ff0000;">0x600f</div>
<div class="t m" style="left:1543px;top:299.12px;font-size:15.5px;letter-spacing:0.70px;color:#ff0000;">0xC68000</div>
<div class="t m" style="left:1703px;top:299.12px;font-size:15.5px;letter-spacing:0.70px;color:#0000ff;">LD</div>
<div class="t m" style="left:1763px;top:299.12px;font-size:15.5px;letter-spacing:0.70px;color:#000;"><span style="color:#0000ff">A</span><span style="color:#000">,</span><span style="color:#ff0000">0x8000</span></div>
<div class="t m" style="left:1263px;top:319.12px;font-size:15.5px;letter-spacing:0.70px;color:#ff0000;">0x6012</div>
<div class="t m" style="left:1543px;top:319.12px;font-size:15.5px;letter-spacing:0.70px;color:#ff0000;">0xA182</div>
<div class="t m" style="left:1703px;top:319.12px;font-size:15.5px;letter-spacing:0.70px;color:#0000ff;">CP</div>
<div class="t m" style="left:1763px;top:319.12px;font-size:15.5px;letter-spacing:0.70px;color:#000;"><span style="color:#0000ff">A</span><span style="color:#000">,</span><span style="color:#000">#</span><span style="color:#ff0000">0x82</span></div>
<div class="t m" style="left:1263px;top:339.12px;font-size:15.5px;letter-spacing:0.70px;color:#ff0000;">0x6014</div>
<div class="t m" style="left:1543px;top:339.12px;font-size:15.5px;letter-spacing:0.70px;color:#ff0000;">0x2706</div>
<div class="t m" style="left:1703px;top:339.12px;font-size:15.5px;letter-spacing:0.70px;color:#0000ff;">JREQ</div>
<div class="t m" style="left:1763px;top:339.12px;font-size:15.5px;letter-spacing:0.70px;color:#000;"><span style="color:#ff0000">0x601c</span></div>
<div class="t m" style="left:1263px;top:359.12px;font-size:15.5px;letter-spacing:0.70px;color:#ff0000;">0x6016</div>
<div class="t m" style="left:1543px;top:359.12px;font-size:15.5px;letter-spacing:0.70px;color:#ff0000;">0xA1AC</div>
<div class="t m" style="left:1703px;top:359.12px;font-size:15.5px;letter-spacing:0.70px;color:#0000ff;">CP</div>
<div class="t m" style="left:1763px;top:359.12px;font-size:15.5px;letter-spacing:0.70px;color:#000;"><span style="color:#0000ff">A</span><span style="color:#000">,</span><span style="color:#000">#</span><span style="color:#ff0000">0xac</span></div>
<div class="t m" style="left:1263px;top:379.12px;font-size:15.5px;letter-spacing:0.70px;color:#ff0000;">0x6018</div>
<div class="t m" style="left:1543px;top:379.12px;font-size:15.5px;letter-spacing:0.70px;color:#ff0000;">0x2702</div>
<div class="t m" style="left:1703px;top:379.12px;font-size:15.5px;letter-spacing:0.70px;color:#0000ff;">JREQ</div>
<div class="t m" style="left:1763px;top:379.12px;font-size:15.5px;letter-spacing:0.70px;color:#000;"><span style="color:#ff0000">0x601c</span></div>
<div class="t m" style="left:1263px;top:399.12px;font-size:15.5px;letter-spacing:0.70px;color:#ff0000;">0x601a</div>
<div class="t m" style="left:1543px;top:399.12px;font-size:15.5px;letter-spacing:0.70px;color:#ff0000;">0x99</div>
<div class="t m" style="left:1703px;top:399.12px;font-size:15.5px;letter-spacing:0.70px;color:#0000ff;">SCF</div>
<div class="t m" style="left:1263px;top:419.12px;font-size:15.5px;letter-spacing:0.70px;color:#ff0000;">0x601b</div>
<div class="t m" style="left:1543px;top:419.12px;font-size:15.5px;letter-spacing:0.70px;color:#ff0000;">0x81</div>
<div class="t m" style="left:1703px;top:419.12px;font-size:15.5px;letter-spacing:0.70px;color:#0000ff;">RET</div>
<div class="t m" style="left:1263px;top:439.12px;font-size:15.5px;letter-spacing:0.70px;color:#ff0000;">0x601c</div>
<div class="t m" style="left:1543px;top:439.12px;font-size:15.5px;letter-spacing:0.70px;color:#ff0000;">0x98</div>
<div class="t m" style="left:1703px;top:439.12px;font-size:15.5px;letter-spacing:0.70px;color:#0000ff;">RCF</div>
<div class="t m" style="left:1263px;top:459.12px;font-size:15.5px;letter-spacing:0.70px;color:#ff0000;">0x601d</div>
<div class="t m" style="left:1543px;top:459.12px;font-size:15.5px;letter-spacing:0.70px;color:#ff0000;">0x81</div>
<div class="t m" style="left:1703px;top:459.12px;font-size:15.5px;letter-spacing:0.70px;color:#0000ff;">RET</div>
<div class="t m" style="left:1263px;top:479.12px;font-size:15.5px;letter-spacing:0.70px;color:#ff0000;">0x601e</div>
<div class="t m" style="left:1543px;top:479.12px;font-size:15.5px;letter-spacing:0.70px;color:#ff0000;">0xC64800</div>
<div class="t m" style="left:1703px;top:479.12px;font-size:15.5px;letter-spacing:0.70px;color:#0000ff;">LD</div>
<div class="t m" style="left:1763px;top:479.12px;font-size:15.5px;letter-spacing:0.70px;color:#000;"><span style="color:#0000ff">A</span><span style="color:#000">,</span><span style="color:#ff0000">0x4800</span></div>
<div class="t m" style="left:1263px;top:499.12px;font-size:15.5px;letter-spacing:0.70px;color:#ff0000;">0x6021</div>
<div class="t m" style="left:1543px;top:499.12px;font-size:15.5px;letter-spacing:0.70px;color:#ff0000;">0xA1AA</div>
<div class="t m" style="left:1703px;top:499.12px;font-size:15.5px;letter-spacing:0.70px;color:#0000ff;">CP</div>
<div class="t m" style="left:1763px;top:499.12px;font-size:15.5px;letter-spacing:0.70px;color:#000;"><span style="color:#0000ff">A</span><span style="color:#000">,</span><span style="color:#000">#</span><span style="color:#ff0000">0xaa</span></div>
<div class="t m" style="left:1263px;top:519.12px;font-size:15.5px;letter-spacing:0.70px;color:#ff0000;">0x6023</div>
<div class="t m" style="left:1543px;top:519.12px;font-size:15.5px;letter-spacing:0.70px;color:#ff0000;">0x2609</div>
<div class="t m" style="left:1703px;top:519.12px;font-size:15.5px;letter-spacing:0.70px;color:#0000ff;">JRNE</div>
<div class="t m" style="left:1763px;top:519.12px;font-size:15.5px;letter-spacing:0.70px;color:#000;"><span style="color:#ff0000">0x602e</span></div>
<div class="t m" style="left:1263px;top:539.12px;font-size:15.5px;letter-spacing:0.70px;color:#ff0000;">0x6025</div>
<div class="t m" style="left:1543px;top:539.12px;font-size:15.5px;letter-spacing:0.70px;color:#ff0000;">0x5F</div>
<div class="t m" style="left:1703px;top:539.12px;font-size:15.5px;letter-spacing:0.70px;color:#000;">CLRW</div>
<div class="t m" style="left:1763px;top:539.12px;font-size:15.5px;letter-spacing:0.70px;color:#000;"><span style="color:#0000ff">X</span></div>
<div class="t m" style="left:1263px;top:559.12px;font-size:15.5px;letter-spacing:0.70px;color:#ff0000;">0x6026</div>
<div class="t m" style="left:1543px;top:559.12px;font-size:15.5px;letter-spacing:0.70px;color:#ff0000;">0x4F</div>
<div class="t m" style="left:1703px;top:559.12px;font-size:15.5px;letter-spacing:0.70px;color:#0000ff;">CLR</div>
<div class="t m" style="left:1763px;top:559.12px;font-size:15.5px;letter-spacing:0.70px;color:#000;"><span style="color:#0000ff">A</span></div>
<div class="a" style="left:1886px;top:155px;width:18px;height:423px;background:#f0f0f0"></div>
<svg style="left:1890px;top:162px" width="12" height="10" viewBox="0 0 12 10"><path d="M1 7 L6 2 L11 7" fill="none" stroke="#606060" stroke-width="2.4"/></svg>
<svg style="left:1890px;top:562px" width="12" height="10" viewBox="0 0 12 10"><path d="M1 2 L6 7 L11 2" fill="none" stroke="#606060" stroke-width="2.5"/></svg>
<div class="a" style="left:1888px;top:231px;width:16px;height:20px;background:#cdcdcd"></div>
<div class="a" style="left:1237px;top:578px;width:649px;height:20px;background:#f0f0f0"></div>
<div class="a" style="left:1259px;top:579px;width:151px;height:19px;background:#cdcdcd"></div>
<svg style="left:1242px;top:582px" width="10" height="12" viewBox="0 0 10 12"><path d="M7 1 L2 6 L7 11" fill="none" stroke="#606060" stroke-width="2.5"/></svg>
<svg style="left:1870px;top:582px" width="10" height="12" viewBox="0 0 10 12"><path d="M3 1 L8 6 L3 11" fill="none" stroke="#606060" stroke-width="2.5"/></svg>
<div class="a" style="left:0px;top:609px;width:1904px;height:391px;background:#f0f0f0"></div>
<div class="a" style="left:0px;top:612px;width:16px;height:386px;background:#f0f0f0;border-right:1px solid #c8c8c8;border-bottom:1px solid #c8c8c8;box-sizing:border-box"></div>
<div class="a" style="left:0px;top:612px;width:15px;height:1px;background:#b8b8b8"></div>
<svg style="left:3px;top:618px" width="9" height="9" viewBox="0 0 9 9"><path d="M1.2 1.2 L7.8 7.8 M7.8 1.2 L1.2 7.8" stroke="#000" stroke-width="1.9"/></svg>
<svg style="left:6px;top:634px" width="5" height="8" viewBox="0 0 5 8"><path d="M0 0 L5 4 L0 8Z" fill="#808080"/></svg>
<div class="t" style="left:-14px;top:966px;width:42px;font-size:13.5px;transform:rotate(-90deg);letter-spacing:-0.1px">Output</div>
<div class="a" style="left:17px;top:613px;width:1887px;height:360px;background:#fff;border-left:2px solid #a0a0a0;border-top:1px solid #b0b0b0;box-sizing:border-box"></div>
<div class="a" style="left:19px;top:614px;width:1885px;height:1px;background:#707070"></div>
<div class="a" style="left:19px;top:615px;width:1px;height:358px;background:#696969"></div>
<div class="t m" style="left:21px;top:619.12px;font-size:15.5px;letter-spacing:0.70px;color:#000;"> -&gt; Emulator reset (usb://usb)...</div>
<div class="t m" style="left:21px;top:639.12px;font-size:15.5px;letter-spacing:0.70px;color:#000;"> done.</div>
<div class="t m" style="left:21px;top:659.12px;font-size:15.5px;letter-spacing:0.70px;color:#000;">Opening application c:\Users\kolya\Desktop\test\test1\Debug\test1.elf...</div>
<div class="t m" style="left:21px;top:679.12px;font-size:15.5px;letter-spacing:0.70px;color:#000;">done.</div>
<div class="t m" style="left:21px;top:699.12px;font-size:15.5px;letter-spacing:0.70px;color:#000;"> -&gt; Chip-reset...</div>
<div class="t m" style="left:21px;top:719.12px;font-size:15.5px;letter-spacing:0.70px;color:#000;">  ** Application stopped:</div>
<div class="t m" style="left:21px;top:759.12px;font-size:15.5px;letter-spacing:0.70px;color:#000;">Application closed.</div>
<div class="t m" style="left:21px;top:779.12px;font-size:15.5px;letter-spacing:0.70px;color:#000;">Debug session closed.</div>
<div class="t m" style="left:21px;top:799.12px;font-size:15.5px;letter-spacing:0.70px;color:#000;">Starting debug session...</div>
<div class="t m" style="left:21px;top:819.12px;font-size:15.5px;letter-spacing:0.70px;color:#000;"> -&gt; Emulator reset (usb://usb)...</div>
<div class="t m" style="left:21px;top:839.12px;font-size:15.5px;letter-spacing:0.70px;color:#000;"> done.</div>
<div class="t m" style="left:21px;top:859.12px;font-size:15.5px;letter-spacing:0.70px;color:#000;">Opening application c:\Users\kolya\Desktop\test\test1\Debug\test1.elf...</div>
<div class="t m" style="left:21px;top:879.12px;font-size:15.5px;letter-spacing:0.70px;color:#000;">done.</div>
<div class="t m" style="left:21px;top:899.12px;font-size:15.5px;letter-spacing:0.70px;color:#000;"> -&gt; Chip-reset...</div>
<div class="t m" style="left:21px;top:919.12px;font-size:15.5px;letter-spacing:0.70px;color:#000;">  ** Application stopped:</div>
<div class="a" style="left:1889px;top:615px;width:15px;height:357px;background:#f0f0f0"></div>
<svg style="left:1892px;top:622px" width="12" height="10" viewBox="0 0 12 10"><path d="M1 7 L6 2 L11 7" fill="none" stroke="#606060" stroke-width="2.4"/></svg>
<svg style="left:1892px;top:957px" width="12" height="10" viewBox="0 0 12 10"><path d="M1 2 L6 7 L11 2" fill="none" stroke="#606060" stroke-width="2.4"/></svg>
<div class="a" style="left:1889px;top:929px;width:15px;height:21px;background:#cdcdcd"></div>
<div class="a" style="left:17px;top:972px;width:1887px;height:22px;background:#f0f0f0"></div>
<div class="a" style="left:17px;top:972px;width:1887px;height:1px;background:#000"></div>
<div class="a" style="left:17px;top:993px;width:1887px;height:1px;background:#dcdcdc"></div>
<div class="a" style="left:0px;top:999px;width:1904px;height:1px;background:#a8a8a8"></div>
<div class="a" style="left:20px;top:973px;width:22px;height:20px;background:#f0f0f0;border-right:2px solid #a0a0a0;border-bottom:2px solid #a0a0a0;border-left:1px solid #fff;box-sizing:border-box"></div>
<div class="a" style="left:42px;top:973px;width:22px;height:20px;background:#f0f0f0;border-right:2px solid #a0a0a0;border-bottom:2px solid #a0a0a0;border-left:1px solid #fff;box-sizing:border-box"></div>
<div class="a" style="left:65px;top:973px;width:22px;height:20px;background:#f0f0f0;border-right:2px solid #a0a0a0;border-bottom:2px solid #a0a0a0;border-left:1px solid #fff;box-sizing:border-box"></div>
<div class="a" style="left:87px;top:973px;width:22px;height:20px;background:#f0f0f0;border-right:2px solid #a0a0a0;border-bottom:2px solid #a0a0a0;border-left:1px solid #fff;box-sizing:border-box"></div>
<svg style="left:24px;top:977px" width="14" height="13" viewBox="0 0 14 13"><rect x="1" y="1" width="1.5" height="11" fill="#a0a0a0"/><path d="M10 1 L4 6.5 L10 12Z" fill="#a0a0a0"/></svg>
<svg style="left:46px;top:977px" width="14" height="13" viewBox="0 0 14 13"><path d="M10 1 L4 6.5 L10 12Z" fill="#a0a0a0"/></svg>
<svg style="left:69px;top:977px" width="14" height="13" viewBox="0 0 14 13"><path d="M4 1 L10 6.5 L4 12Z" fill="#a0a0a0"/></svg>
<svg style="left:91px;top:977px" width="14" height="13" viewBox="0 0 14 13"><path d="M4 1 L10 6.5 L4 12Z" fill="#a0a0a0"/><rect x="11" y="1" width="1.5" height="11" fill="#a0a0a0"/></svg>
<svg style="left:0px;top:972px" width="600" height="22" viewBox="0 0 600 22"><path d="M110.5 0.5 L117 20.5" stroke="#000" stroke-width="1.3" fill="none"/><path d="M161.5 20.5 L164 0.5 L170.5 20.5" stroke="#000" stroke-width="1.3" fill="none"/><path d="M217.5 20.5 L220 0.5 L226.5 20.5" stroke="#000" stroke-width="1.3" fill="none"/><path d="M328.5 20.5 L331 0.5 L337.5 20.5" stroke="#000" stroke-width="1.3" fill="none"/><path d="M439.5 20.5 L442 0.5 L448.5 20.5" stroke="#000" stroke-width="1.3" fill="none"/><path d="M504.5 20.5 L511 0.5 L513 20.5" stroke="#000" stroke-width="1.3" fill="none"/><path d="M577.5 20.5 L584 0.5" stroke="#000" stroke-width="1.3" fill="none"/></svg>
<div class="a" style="left:443px;top:972px;width:67px;height:1px;background:#f0f0f0"></div>
<div class="t" style="left:124px;top:976.00px;font-size:13px;letter-spacing:-0.1px">Build</div>
<div class="t" style="left:177px;top:976.00px;font-size:13px;letter-spacing:-0.1px">Tools</div>
<div class="t" style="left:235px;top:976.00px;font-size:13px;letter-spacing:-0.1px">Find in Files 1</div>
<div class="t" style="left:347px;top:976.00px;font-size:13px;letter-spacing:-0.1px">Find in Files 2</div>
<div class="t" style="left:453px;top:976.00px;font-size:13px;font-weight:bold;letter-spacing:-0.1px">Debug</div>
<div class="t" style="left:519px;top:976.00px;font-size:13px;letter-spacing:-0.1px">Console</div>
<svg style="left:10px;top:67px" width="24" height="22" viewBox="0 0 24 22"><path d="M5 2.5 H13 L17.5 7 V19.5 H5Z" fill="#fff" stroke="#000" stroke-width="1.5"/><path d="M12.5 2 V7.5 H18" fill="none" stroke="#000" stroke-width="1.3"/><rect x="7" y="10" width="9" height="1.6" fill="#555"/><rect x="7" y="13" width="9" height="1.6" fill="#222"/><rect x="7" y="16" width="9" height="1.6" fill="#555"/><path d="M0.5 3 L4 6.5 M4 1 V7 M0 6.5 H4" stroke="#aaa" stroke-width="1"/><rect x="5" y="19" width="13" height="1.5" fill="#333"/></svg>
<svg style="left:38px;top:68px" width="24" height="22" viewBox="0 0 24 22"><path d="M1.5 4 H6 L7 3 H11 V6 H15.5 V9" fill="#fff" stroke="#000" stroke-width="1.6"/><path d="M1.5 4 V17" stroke="#000" stroke-width="1.6"/><path d="M1.5 17.5 L6.5 9.5 H19.5 L14 17.5Z" fill="#808000" stroke="#000" stroke-width="1.4"/><path d="M11 3 Q14 -1 17 3" fill="none" stroke="#000" stroke-width="1.4"/><path d="M15 3 L19 3 L18 -0.5Z" fill="#000"/></svg>
<svg style="left:68px;top:66px" width="24" height="22" viewBox="0 0 24 22"><rect x="2.7" y="8" width="13" height="11.5" fill="#f0f0f0" stroke="#000" stroke-width="1.5"/><rect x="2" y="7.2" width="14.5" height="2.6" fill="#000080"/><path d="M4.5 12 H14 M4.5 14.5 H13 M4.5 17 H14" stroke="#aaa" stroke-width="1.2"/><path d="M20 9 L15.5 3.5" stroke="#900" stroke-width="1.6"/><path d="M14 2 L18.5 2.5 L14.5 6.5Z" fill="#900"/></svg>
<svg style="left:106px;top:68px" width="24" height="22" viewBox="0 0 24 22"><rect x="2.7" y="2.7" width="16" height="16" fill="#808000" stroke="#000" stroke-width="1.5"/><rect x="5.5" y="3" width="10" height="8" fill="#f4f4f4" stroke="#000" stroke-width="1.2"/><rect x="5" y="13" width="12" height="6" fill="#000"/><rect x="13.5" y="14.5" width="2" height="3.5" fill="#fff"/><rect x="17" y="3.5" width="1.4" height="1.4" fill="#ccc"/></svg>
<svg style="left:144px;top:67px" width="24" height="22" viewBox="0 0 24 22"><path d="M5.5 3 H17.5 L16 8.5 H4Z" fill="#fff" stroke="#000" stroke-width="1.5"/><rect x="6.5" y="4.5" width="8" height="1.4" fill="#666"/><rect x="1.2" y="9" width="16.5" height="9.5" rx="2.5" fill="#fff" stroke="#000" stroke-width="1.6"/><rect x="2.5" y="12.5" width="14" height="1.8" fill="#000"/><path d="M17.5 9 L19.5 8 V16 L17.5 18.5" fill="#ddd" stroke="#000" stroke-width="1.3"/><rect x="3" y="15.2" width="13" height="1.2" fill="#aaa"/></svg>
<svg style="left:194px;top:68px" width="24" height="22" viewBox="0 0 24 22"><path d="M4 6 Q8 0.5 13.5 1.5 Q18.5 3 17.5 9 Q17 12 14 13.5" fill="none" stroke="#a8a8a8" stroke-width="1.5"/><path d="M2 3 V8.5 H7.5" fill="none" stroke="#a8a8a8" stroke-width="1.8"/><rect x="2" y="15" width="10.5" height="2.2" fill="#a8a8a8"/><path d="M13.5 15 V17.3 M16 15 V17.3 M18.5 15 V17.3" stroke="#a8a8a8" stroke-width="1.1"/></svg>
<svg style="left:223px;top:68px" width="24" height="22" viewBox="0 0 24 22"><path d="M17 6 Q13 0.5 7.5 1.5 Q2.5 3 3.5 9 Q4 12 7 13.5" fill="none" stroke="#a8a8a8" stroke-width="1.5"/><path d="M19 3 V8.5 H13.5" fill="none" stroke="#a8a8a8" stroke-width="1.8"/><rect x="8.5" y="15" width="10.5" height="2.2" fill="#a8a8a8"/><path d="M2.5 15 V17.3 M5 15 V17.3 M7.5 15 V17.3" stroke="#a8a8a8" stroke-width="1.1"/></svg>
<svg style="left:264px;top:67px" width="24" height="22" viewBox="0 0 24 22"><path d="M5 2 L9 11 M13 2 L9 11" stroke="#a8a8a8" stroke-width="1.3" fill="none"/><path d="M9 11 L7 14 M9 11 L11 14" stroke="#a8a8a8" stroke-width="1.3"/><ellipse cx="6" cy="16.5" rx="2.6" ry="2.8" fill="none" stroke="#a8a8a8" stroke-width="1.3"/><ellipse cx="12" cy="16.5" rx="2.6" ry="2.8" fill="none" stroke="#a8a8a8" stroke-width="1.3"/></svg>
<svg style="left:290px;top:68px" width="24" height="22" viewBox="0 0 24 22"><path d="M2.7 2.7 H9 L11 4.7 V14.5 H2.7Z" fill="#f4f4f4" stroke="#b0b0b0" stroke-width="1.2"/><path d="M4.5 7 H8.5 M4.5 9 H9 M4.5 11 H9" stroke="#c0c0c0"/><path d="M10.5 7 H17 L20 10 V19 H10.5Z" fill="#f4f4f4" stroke="#b0b0b0" stroke-width="1.2"/><path d="M12.5 12 H16 M12.5 14 H18 M12.5 16 H18" stroke="#c0c0c0"/></svg>
<svg style="left:319px;top:67px" width="24" height="22" viewBox="0 0 24 22"><rect x="3" y="4" width="14" height="14.5" rx="1.5" fill="#7a7a40" stroke="#000" stroke-width="1.6"/><path d="M6.5 5.5 Q6.5 2 10 2 Q13.5 2 13.5 5.5Z" fill="#fff" stroke="#000" stroke-width="1.2"/><rect x="11" y="10.5" width="9.5" height="9.5" fill="#fff" stroke="#000080" stroke-width="1.6"/><path d="M13 14 H16 M13 16.5 H19" stroke="#000080" stroke-width="1.4"/></svg>
<svg style="left:545px;top:68px" width="24" height="22" viewBox="0 0 24 22"><rect x="7" y="6" width="13" height="13" fill="#fafafa" stroke="#bbb" stroke-width="1.2"/><path d="M10 10 H13 M11 13 H18 M11 15.5 H18 M12 18 H17" stroke="#222" stroke-width="1.2"/><path d="M2.5 1 Q3 7 7 12" fill="none" stroke="#f00" stroke-width="1.4"/><circle cx="7" cy="11.5" r="1.8" fill="#f00"/></svg>
<svg style="left:584px;top:67px" width="24" height="22" viewBox="0 0 24 22"><path d="M1.8 2 H8 L9 3 H12.5 Q14 3 14 5 V9 L7 14 H2.5 Q1.5 14 1.5 13Z" fill="#f0f0f0" stroke="#000" stroke-width="1.5"/><path d="M4 5 L7 8" stroke="#3040c0" stroke-width="1.2"/><rect x="6.5" y="12" width="5" height="8" fill="#000"/><rect x="14" y="12" width="5" height="8" fill="#000"/><rect x="9.5" y="7" width="3" height="6" fill="#000"/><rect x="14.5" y="7" width="3" height="6" fill="#000"/><rect x="11" y="13" width="4" height="3" fill="#000"/><rect x="7.5" y="17" width="1.5" height="1.5" fill="#fff"/><rect x="15.5" y="17" width="1.5" height="1.5" fill="#fff"/></svg>
<svg style="left:623px;top:67px" width="24" height="22" viewBox="0 0 24 22"><path d="M4.5 20 L1.5 13.5 Q1 11.5 3 12 L5 14.5 V5 Q5 3.5 6.3 3.5 Q7.6 3.5 7.6 5 V3 Q7.6 1.5 9 1.5 Q10.4 1.5 10.4 3 V3.5 Q10.4 2.2 11.8 2.2 Q13.2 2.2 13.2 3.5 V6 Q13.2 4.7 14.5 4.7 Q16 4.7 16 6 V14 Q16 17.5 13.5 20Z" fill="#fff" stroke="#000" stroke-width="1.5" stroke-linejoin="round"/><path d="M7.6 5 V11 M10.4 4 V11 M13.2 5 V11" stroke="#000" stroke-width="1.1"/></svg>
<svg style="left:652px;top:67px" width="24" height="22" viewBox="0 0 24 22"><path d="M4.5 20 L1.5 13.5 Q1 11.5 3 12 L5 14.5 V5 Q5 3.5 6.3 3.5 Q7.6 3.5 7.6 5 V3 Q7.6 1.5 9 1.5 Q10.4 1.5 10.4 3 V3.5 Q10.4 2.2 11.8 2.2 Q13.2 2.2 13.2 3.5 V6 Q13.2 4.7 14.5 4.7 Q16 4.7 16 6 V14 Q16 17.5 13.5 20Z" fill="#f4f4f4" stroke="#b0b0b0" stroke-width="1.5" stroke-linejoin="round"/><path d="M7.6 5 V11 M10.4 4 V11 M13.2 5 V11" stroke="#b0b0b0" stroke-width="1.1"/><path d="M1 1 H18 L13 7 H2Z" fill="#b8b8b8"/><path d="M1 20 L5 15" stroke="#b8b8b8" stroke-width="2"/></svg>
<svg style="left:681px;top:67px" width="24" height="22" viewBox="0 0 24 22"><path d="M4.5 20 L1.5 13.5 Q1 11.5 3 12 L5 14.5 V5 Q5 3.5 6.3 3.5 Q7.6 3.5 7.6 5 V3 Q7.6 1.5 9 1.5 Q10.4 1.5 10.4 3 V3.5 Q10.4 2.2 11.8 2.2 Q13.2 2.2 13.2 3.5 V6 Q13.2 4.7 14.5 4.7 Q16 4.7 16 6 V14 Q16 17.5 13.5 20Z" fill="#fff" stroke="#000" stroke-width="1.5" stroke-linejoin="round" transform="translate(1.5 0)"/><path d="M9 5 V11 M12 4 V11 M15 5 V11" stroke="#000" stroke-width="1.1"/><path d="M4 7 L15 20 M15 7 L5 20" stroke="#800000" stroke-width="2.2"/></svg>
<svg style="left:708px;top:68px" width="24" height="22" viewBox="0 0 24 22"><rect x="2.5" y="11.5" width="6" height="5.5" rx="1.5" fill="#00e0f0" stroke="#000" stroke-width="1.5"/><rect x="12" y="11.5" width="6" height="5.5" rx="1.5" fill="#00e0f0" stroke="#000" stroke-width="1.5"/><path d="M8.5 13 H12 M3 11.5 L9 4.5 L10.5 7 M17.5 11.5 L21.5 5.5 L22 8" fill="none" stroke="#000" stroke-width="1.3"/></svg>
<svg style="left:748px;top:67px" width="24" height="22" viewBox="0 0 24 22"><path d="M2 20.5 L17 5" stroke="#000" stroke-width="1.4"/><path d="M11 10 L15 6 L17 9 L20 11 L21.5 14 L17 19 L14 17 L11.5 14Z" fill="#0000ff" stroke="#000" stroke-width="1.2"/></svg>
<svg style="left:776px;top:67px" width="24" height="22" viewBox="0 0 24 22"><path d="M3 20 L14 9" stroke="#b0b0b0" stroke-width="1.3"/><path d="M12 11 L16 8 L18 12 L20 14 L18 18 L15 20 L12 17Z" fill="#b0b0b0"/><path d="M4 5.5 Q4 1.5 8 1.5 Q11 1.5 12.5 5" fill="none" stroke="#b0b0b0" stroke-width="1.6"/><path d="M10 4 L14 7 L14.5 2Z" fill="#b0b0b0"/></svg>
<svg style="left:805px;top:67px" width="24" height="22" viewBox="0 0 24 22"><path d="M3 20 L14 9" stroke="#b0b0b0" stroke-width="1.3"/><path d="M12 11 L16 8 L18 12 L20 14 L18 18 L15 20 L12 17Z" fill="#b0b0b0"/><path d="M13 5.5 Q13 1.5 9 1.5 Q6 1.5 5 4.5" fill="none" stroke="#b0b0b0" stroke-width="1.6"/><path d="M2 4.5 L7 5.5 L4 1Z" fill="#b0b0b0"/></svg>
<svg style="left:834px;top:67px" width="24" height="22" viewBox="0 0 24 22"><path d="M3 20 L14 9" stroke="#b0b0b0" stroke-width="1.3"/><path d="M12 11 L16 8 L18 12 L20 14 L18 18 L15 20 L12 17Z" fill="#b0b0b0"/><path d="M4 4 L10 9 L16 2 L13 8 L11 11 L6 8Z" fill="#b0b0b0"/></svg>
<svg style="left:873px;top:67px" width="24" height="22" viewBox="0 0 24 22"><rect x="2.7" y="2.7" width="16" height="17" fill="#fff" stroke="#000" stroke-width="1.6"/><path d="M19 19.5 H20" stroke="#000"/><path d="M6 10 Q6 5.5 11 5.5 H13" fill="none" stroke="#10a010" stroke-width="1.8"/><path d="M12 3 L16 5.8 L12 8.5Z" fill="#10a010"/><path d="M16 11 Q16 15.5 11 15.5 H9" fill="none" stroke="#10a010" stroke-width="1.8"/><path d="M10 12.5 L6 15.2 L10 18Z" fill="#10a010"/></svg>
<svg style="left:922px;top:67px" width="24" height="22" viewBox="0 0 24 22"><path d="M2.5 13 L6 9 H20 V15 L17.5 18.5 H2.5Z" fill="#fff" stroke="#000" stroke-width="1.4"/><path d="M2.5 13 H17.5 V18.5 M17.5 13 L20 9.5" fill="none" stroke="#000" stroke-width="1.2"/><rect x="4" y="15" width="2" height="1.5" fill="#f00"/><rect x="13" y="15" width="2" height="1.5" fill="#00f"/><rect x="7" y="15.2" width="5" height="1" fill="#888"/><path d="M4 19.5 L8 21" stroke="#aaa" stroke-width="1.2"/><polygon points="20.00,6.00 17.55,7.26 18.39,9.89 15.76,9.05 14.50,11.50 13.24,9.05 10.61,9.89 11.45,7.26 9.00,6.00 11.45,4.74 10.61,2.11 13.24,2.95 14.50,0.50 15.76,2.95 18.39,2.11 17.55,4.74" fill="#ffff00" stroke="#000" stroke-width="1.1"/><circle cx="14.5" cy="6" r="1.54" fill="#000"/></svg>
<svg style="left:956px;top:67px" width="24" height="22" viewBox="0 0 24 22"><rect x="2" y="2" width="12" height="18.5" fill="#000"/><rect x="3" y="3" width="4" height="2.5" fill="#00ff00"/><rect x="7" y="3" width="6" height="2.5" fill="#0000ff"/><rect x="3" y="5.5" width="10" height="4.5" fill="#0000ff"/><rect x="3" y="10" width="10" height="5.5" fill="#ff0000"/><rect x="3" y="15.5" width="4.5" height="4" fill="#00ffff"/><rect x="7.5" y="13" width="5.5" height="6.5" fill="#00ffff"/><rect x="3" y="13" width="4.5" height="2.5" fill="#ff0000"/></svg>
<svg style="left:982px;top:67px" width="24" height="22" viewBox="0 0 24 22"><path d="M2 10 H17 M2 14.5 H17" stroke="#000" stroke-width="2.2"/><path d="M4 18 L15.5 6" stroke="#000" stroke-width="2"/></svg>
<svg style="left:1008px;top:67px" width="24" height="22" viewBox="0 0 24 22"><path d="M5 8 V13 M2.5 18 L7 13 L11 18" stroke="#000" stroke-width="1.2" fill="none"/><rect x="3.5" y="6.5" width="3" height="3" fill="#ff0" stroke="#000"/><path d="M5 11 L7.5 13.5 L5 16 L2.5 13.5Z" fill="#0ff" stroke="#000" stroke-width="0.8"/><rect x="1" y="16.5" width="3" height="3" fill="#ff0" stroke="#000"/><rect x="10" y="16.5" width="3" height="3" fill="#ff0" stroke="#000"/><path d="M7.5 4 L16 12.5" stroke="#000" stroke-width="2.2"/><path d="M7.5 4 L9.5 6" stroke="#ff0" stroke-width="1.4"/><rect x="14.5" y="14.5" width="3.5" height="3.5" fill="#f00"/><rect x="12" y="2" width="1.2" height="1.2" fill="#c44"/><rect x="16" y="2" width="1.2" height="1.2" fill="#c44"/><rect x="14" y="5" width="1.2" height="1.2" fill="#c44"/><rect x="18" y="6" width="1.2" height="1.2" fill="#c44"/></svg>
<svg style="left:9px;top:104px" width="24" height="22" viewBox="0 0 24 22"><polygon points="20.94,15.33 15.53,20.74 7.87,20.74 2.46,15.33 2.46,7.67 7.87,2.26 15.53,2.26 20.94,7.67" fill="#a8a8a8"/><path d="M3.5 9.5 Q4.5 4.5 9.5 3" fill="none" stroke="#ffff00" stroke-width="1.6"/><text x="6.3" y="16.5" font-family="Liberation Sans" font-weight="bold" font-size="13" fill="#fff">D</text></svg>
<svg style="left:38px;top:104px" width="24" height="22" viewBox="0 0 24 22"><circle cx="11.3" cy="11.5" r="9" fill="#ff0000" stroke="#3020a0" stroke-width="1.3"/><path d="M4 8 Q6 3.5 10 2.8" fill="none" stroke="#ffff40" stroke-width="1.2"/><path d="M7 7 L15.5 16 M15.5 7 L7 16" stroke="#fff" stroke-width="2.6"/></svg>
<svg style="left:79px;top:106px" width="24" height="22" viewBox="0 0 24 22"><path d="M2.5 6.5 H8.5 V2 L15.5 9 L8.5 16 V11.5 H2.5Z" fill="#ffff00" stroke="#000" stroke-width="1.5"/></svg>
<svg style="left:120px;top:104px" width="24" height="22" viewBox="0 0 24 22"><rect x="5" y="2" width="5" height="12" rx="2.5" fill="#800000"/><path d="M5.5 10 L7.5 15 L9.5 10Z" fill="#800000"/><circle cx="7.5" cy="18.3" r="2.4" fill="#800000"/></svg>
<svg style="left:144px;top:104px" width="24" height="22" viewBox="0 0 24 22"><rect x="6.6" y="2.6" width="13" height="17.5" fill="#fff" stroke="#a8a8a8" stroke-width="1.3"/><path d="M9 7 H12 M10 10 H17 M10 12.5 H16 M10 15 H17 M10 17.5 H17" stroke="#111" stroke-width="1.2"/><path d="M2 6.5 H8" stroke="#f00" stroke-width="1.5"/><path d="M8 3.5 L12 6.5 L8 9.5Z" fill="#f00"/></svg>
<svg style="left:173px;top:104px" width="24" height="22" viewBox="0 0 24 22"><rect x="2.6" y="2.6" width="13" height="17.5" fill="#fff" stroke="#a8a8a8" stroke-width="1.3"/><path d="M5 7 H8 M6 10 H13 M6 12.5 H12 M6 15 H13 M6 17.5 H13" stroke="#111" stroke-width="1.2"/><path d="M14 10 Q12 4 15 3 Q18 2.5 18.5 7" fill="none" stroke="#0000a0" stroke-width="1.5"/><path d="M14 12 Q12 19 15 20 Q18 20.5 18.5 16" fill="none" stroke="#0000a0" stroke-width="1.5"/><rect x="13" y="7" width="2" height="9" fill="#ccc"/><path d="M16 8 L22 8 L19 11Z" fill="#0000a0"/></svg>
<svg style="left:202px;top:104px" width="24" height="22" viewBox="0 0 24 22"><rect x="2.6" y="2.6" width="13" height="17.5" fill="#fff" stroke="#a8a8a8" stroke-width="1.3"/><path d="M5 7 H8 M6 10 H13 M6 12.5 H12 M6 15 H13 M6 17.5 H13" stroke="#111" stroke-width="1.2"/><path d="M18 4 V17" stroke="#0000a0" stroke-width="1.5"/><path d="M14.5 15 L18 20 L21.5 15Z" fill="#0000a0"/></svg>
<svg style="left:241px;top:104px" width="24" height="22" viewBox="0 0 24 22"><rect x="2.6" y="2.6" width="13" height="17.5" fill="#fff" stroke="#c0c0c0" stroke-width="1.3"/><path d="M5 7 H8 M6 10 H13 M6 12.5 H12 M6 15 H13 M6 17.5 H13" stroke="#c0c0c0" stroke-width="1.2"/><rect x="15" y="10" width="3" height="7" fill="#b0b0b0"/><rect x="19" y="9" width="2" height="8" fill="#b0b0b0"/></svg>
<svg style="left:0px;top:0px" width="1" height="1" viewBox="0 0 1 1"><path d="M288.5 110.8 Q285.7 110.8 285.7 113.5 V115.5 Q285.7 117 284.0 117 Q285.7 117 285.7 118.5 V120.5 Q285.7 123.2 288.5 123.2" fill="none" stroke="#000" stroke-width="2"/><path d="M295.5 110.8 Q298.3 110.8 298.3 113.5 V115.5 Q298.3 117 300.0 117 Q298.3 117 298.3 118.5 V120.5 Q298.3 123.2 295.5 123.2" fill="none" stroke="#000" stroke-width="2"/><path d="M281 107.5 H289 Q292 107.5 292 110.5 V114" fill="none" stroke="#3030a0" stroke-width="1.6"/><path d="M288.5 113 L292 117 L295.5 113Z" fill="#3030a0"/><path d="M317 110.8 Q314.2 110.8 314.2 113.5 V115.5 Q314.2 117 312.5 117 Q314.2 117 314.2 118.5 V120.5 Q314.2 123.2 317 123.2" fill="none" stroke="#000" stroke-width="2"/><path d="M318.5 110.8 Q321.3 110.8 321.3 113.5 V115.5 Q321.3 117 323.0 117 Q321.3 117 321.3 118.5 V120.5 Q321.3 123.2 318.5 123.2" fill="none" stroke="#000" stroke-width="2"/><path d="M311 107.5 H324 Q327 107.5 327 110.5 V114" fill="none" stroke="#3030a0" stroke-width="1.6"/><path d="M323.5 113 L327 117 L330.5 113Z" fill="#3030a0"/><path d="M345 110.8 Q342.2 110.8 342.2 113.5 V115.5 Q342.2 117 340.5 117 Q342.2 117 342.2 118.5 V120.5 Q342.2 123.2 345 123.2" fill="none" stroke="#000" stroke-width="2"/><path d="M352 110.8 Q354.8 110.8 354.8 113.5 V115.5 Q354.8 117 356.5 117 Q354.8 117 354.8 118.5 V120.5 Q354.8 123.2 352 123.2" fill="none" stroke="#000" stroke-width="2"/><path d="M338 107.5 H346 Q349 107.5 349 110.5 V114" fill="none" stroke="#3030a0" stroke-width="1.6"/><path d="M345.5 113 L349 117 L352.5 113Z" fill="#3030a0"/><rect x="357" y="120" width="2.2" height="5" fill="#a000a0"/><rect x="356" y="124" width="4" height="1.2" fill="#a000a0"/><rect x="357" y="117" width="2.2" height="1.6" fill="#a000a0"/><path d="M374 110.8 Q371.2 110.8 371.2 113.5 V115.5 Q371.2 117 369.5 117 Q371.2 117 371.2 118.5 V120.5 Q371.2 123.2 374 123.2" fill="none" stroke="#000" stroke-width="2"/><path d="M375.5 110.8 Q378.3 110.8 378.3 113.5 V115.5 Q378.3 117 380.0 117 Q378.3 117 378.3 118.5 V120.5 Q378.3 123.2 375.5 123.2" fill="none" stroke="#000" stroke-width="2"/><path d="M368 107.5 H381 Q384 107.5 384 110.5 V114" fill="none" stroke="#3030a0" stroke-width="1.6"/><path d="M380.5 113 L384 117 L387.5 113Z" fill="#3030a0"/><rect x="386" y="120" width="2.2" height="5" fill="#a000a0"/><rect x="385" y="124" width="4" height="1.2" fill="#a000a0"/><rect x="386" y="117" width="2.2" height="1.6" fill="#a000a0"/><path d="M401 110.8 Q398.2 110.8 398.2 113.5 V115.5 Q398.2 117 396.5 117 Q398.2 117 398.2 118.5 V120.5 Q398.2 123.2 401 123.2" fill="none" stroke="#000" stroke-width="2"/><path d="M404.5 110.8 Q407.3 110.8 407.3 113.5 V115.5 Q407.3 117 409.0 117 Q407.3 117 407.3 118.5 V120.5 Q407.3 123.2 404.5 123.2" fill="none" stroke="#000" stroke-width="2"/><path d="M403.5 114 V110 Q403.5 107.5 406.5 107.5 H410 Q413 107.5 413 110.5 V114" fill="none" stroke="#3030a0" stroke-width="1.6"/><path d="M409.5 113 L413 117 L416.5 113Z" fill="#3030a0"/><path d="M438 110.8 Q435.2 110.8 435.2 113.5 V115.5 Q435.2 117 433.5 117 Q435.2 117 435.2 118.5 V120.5 Q435.2 123.2 438 123.2" fill="none" stroke="#000" stroke-width="2"/><path d="M442 110.8 Q444.8 110.8 444.8 113.5 V115.5 Q444.8 117 446.5 117 Q444.8 117 444.8 118.5 V120.5 Q444.8 123.2 442 123.2" fill="none" stroke="#000" stroke-width="2"/><path d="M425 113.5 H431" stroke="#3030a0" stroke-width="1.6"/><path d="M430 110 L435 113.5 L430 117Z" fill="#3030a0"/></svg>
<svg style="left:0px;top:0px" width="1" height="1" viewBox="0 0 1 1"><path d="M1044.5 74.8 Q1041.7 74.8 1041.7 77.5 V79.5 Q1041.7 81 1040.0 81 Q1041.7 81 1041.7 82.5 V84.5 Q1041.7 87.2 1044.5 87.2" fill="none" stroke="#000" stroke-width="2"/><path d="M1049 74.8 Q1051.8 74.8 1051.8 77.5 V79.5 Q1051.8 81 1053.5 81 Q1051.8 81 1051.8 82.5 V84.5 Q1051.8 87.2 1049 87.2" fill="none" stroke="#000" stroke-width="2"/><path d="M1039 70.5 H1044 Q1047 70.5 1047 73.5 V77" fill="none" stroke="#3030a0" stroke-width="1.5"/><path d="M1043.5 76 L1047 80 L1050.5 76Z" fill="#3030a0"/><path d="M1049 70.5 H1053 Q1056 70.5 1056 73.5 V77" fill="none" stroke="#3030a0" stroke-width="1.5"/><path d="M1052.5 76 L1056 80 L1059.5 76Z" fill="#3030a0"/></svg>
<svg style="left:463px;top:104px" width="24" height="22" viewBox="0 0 24 22"><path d="M6 8 Q4 2 9 2 Q13 2 14 5" fill="none" stroke="#0000c0" stroke-width="1.8"/><path d="M11 6 L16.5 7 L15.5 1.5Z" fill="#0000c0"/><path d="M4.5 12 H9.5 V8.5 L16 14 L9.5 19.5 V16 H4.5Z" fill="#ffff00" stroke="#000" stroke-width="1.4"/></svg>
<svg style="left:773px;top:104px" width="24" height="22" viewBox="0 0 24 22"><path d="M2 12 L10 8 L20 12 L12 16Z" fill="#f4f4f4" stroke="#b8b8b8" stroke-width="1.2"/><path d="M2 14.5 L12 18.5 L20 14.5 M2 17 L12 21 L20 17" fill="none" stroke="#b8b8b8" stroke-width="1.2"/><path d="M11 2 V9" stroke="#b0b0b0" stroke-width="2.2"/><path d="M7.5 7 L11 11 L14.5 7Z" fill="#b0b0b0"/></svg>
<svg style="left:802px;top:104px" width="24" height="22" viewBox="0 0 24 22"><rect x="2" y="13" width="17" height="7" fill="#f8f8f8" stroke="#b8b8b8" stroke-width="1.4"/><path d="M4 15.5 H17 M4 18 H17" stroke="#b8b8b8" stroke-dasharray="1 1"/><path d="M6 5 V11 M14 5 V11" stroke="#b0b0b0" stroke-width="1.4"/><path d="M3 9 L6 13 L9 9Z M11 9 L14 13 L17 9Z" fill="#b0b0b0"/><path d="M3 2 H18" stroke="#c8c8c8" stroke-dasharray="1 1.5"/></svg>
<svg style="left:829px;top:104px" width="24" height="22" viewBox="0 0 24 22"><rect x="2" y="13" width="17" height="7" fill="#f8f8f8" stroke="#b8b8b8" stroke-width="1.4"/><path d="M4 15.5 H17 M4 18 H17" stroke="#b8b8b8" stroke-dasharray="1 1"/><path d="M5 3 V10 M11 3 V10 M17 3 V10" stroke="#b0b0b0" stroke-width="1.2"/><path d="M3 8 L5 12 L7 8Z M9 8 L11 12 L13 8Z M15 8 L17 12 L19 8Z" fill="#b0b0b0"/></svg>
<svg style="left:869px;top:104px" width="24" height="22" viewBox="0 0 24 22"><rect x="2" y="13" width="17" height="7" fill="#f8f8f8" stroke="#b8b8b8" stroke-width="1.4"/><path d="M4 15.5 H17 M4 18 H17" stroke="#b8b8b8" stroke-dasharray="1 1"/><path d="M6 3 L15 12 M15 3 L6 12" stroke="#b0b0b0" stroke-width="2.6"/></svg>
<svg style="left:908px;top:104px" width="24" height="22" viewBox="0 0 24 22"><rect x="2" y="13" width="17" height="7" fill="#f8f8f8" stroke="#000" stroke-width="1.4"/><path d="M4 15.5 H17 M4 18 H17" stroke="#000" stroke-dasharray="1 1"/><polygon points="17.00,8.00 14.10,9.49 15.10,12.60 11.99,11.60 10.50,14.50 9.01,11.60 5.90,12.60 6.90,9.49 4.00,8.00 6.90,6.51 5.90,3.40 9.01,4.40 10.50,1.50 11.99,4.40 15.10,3.40 14.10,6.51" fill="#ffff00" stroke="#000" stroke-width="1.1"/><circle cx="10.5" cy="8" r="1.82" fill="#000"/><path d="M10.5 1 V5" stroke="#000" stroke-width="1.2"/></svg>
<svg style="left:957px;top:104px" width="24" height="22" viewBox="0 0 24 22"><rect x="3" y="3" width="18" height="14.5" fill="#f4f4f4" stroke="#000" stroke-width="1.5"/><rect x="2.5" y="2" width="19" height="2.5" fill="#000080"/><path d="M1 21.5 L11 11" stroke="#800000" stroke-width="2.2"/><path d="M8 8 L12 5 L18 12 L15 14Z" fill="#808000" stroke="#000" stroke-width="1.2"/></svg>
<svg style="left:986px;top:104px" width="24" height="22" viewBox="0 0 24 22"><path d="M2 3 L6 1 L5 5Z M2 17 L6 15 L5 19Z" fill="#000"/><polygon points="20.50,13.00 17.16,14.72 18.30,18.30 14.72,17.16 13.00,20.50 11.28,17.16 7.70,18.30 8.84,14.72 5.50,13.00 8.84,11.28 7.70,7.70 11.28,8.84 13.00,5.50 14.72,8.84 18.30,7.70 17.16,11.28" fill="#ffff00" stroke="#000" stroke-width="1.1"/><circle cx="13" cy="13" r="2.10" fill="#000"/></svg>
<svg style="left:20px;top:568px" width="21" height="21" viewBox="0 0 21 21"><rect x="3.5" y="0.5" width="16" height="14" fill="#d8d8d8" stroke="#000"/><rect x="3" y="0" width="17" height="3" fill="#000080"/><rect x="0.5" y="5.5" width="9" height="11" fill="#fff" stroke="#000"/><path d="M2 8H8M2 10.5H8M2 13H8" stroke="#3040a0" stroke-width="1.2"/><rect x="4.5" y="8.5" width="9" height="11" fill="#fff" stroke="#000"/><path d="M6 11H12M6 13.5H12M6 16H12" stroke="#3040a0" stroke-width="1.2"/><rect x="8.5" y="11.5" width="9" height="9" fill="#fff" stroke="#000"/><path d="M10 14H16M10 16.5H16M10 19H16" stroke="#3040a0" stroke-width="1.2"/></svg>
<div class="a" style="left:0px;top:137px;width:1904px;height:1px;background:#a8a8a8"></div>
</body></html>
